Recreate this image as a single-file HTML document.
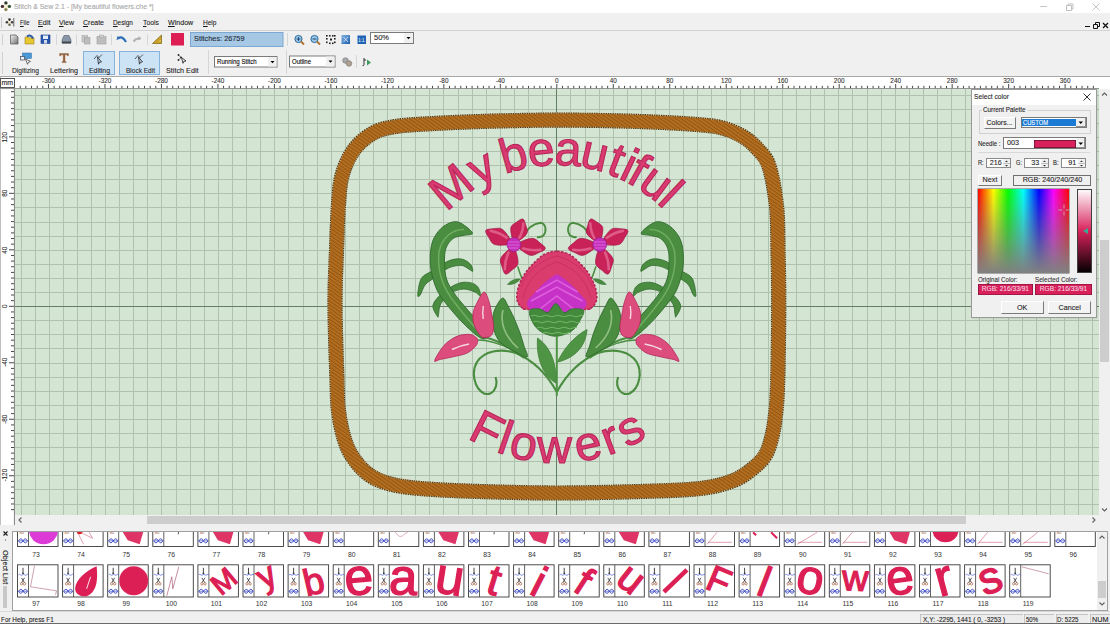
<!DOCTYPE html><html><head><meta charset="utf-8"><style>
html,body{margin:0;padding:0;width:1110px;height:624px;overflow:hidden;background:#f0f0f0}
body{position:relative;font-family:"Liberation Sans",sans-serif}
.r{position:absolute;display:block}
.t{position:absolute;white-space:nowrap;transform-origin:0 50%;font-family:"Liberation Sans",sans-serif;-webkit-text-stroke:0.1px currentColor}
u{text-decoration:underline;text-underline-offset:1px;text-decoration-thickness:0.6px}
</style></head><body>
<div class="r" style="left:0px;top:0px;width:1110px;height:13px;background:#ffffff"></div>
<svg class="r" style="left:0;top:0" width="14" height="13" viewBox="0 0 14 13">
<circle cx="5.9" cy="6.3" r="2.6" fill="#f4f0d8"/>
<circle cx="5.9" cy="2.9" r="1.7" fill="#2e3a2e"/><circle cx="9.4" cy="6.4" r="1.7" fill="#3a5a3a"/>
<circle cx="5.9" cy="9.6" r="1.7" fill="#8a8a5a"/><circle cx="2.4" cy="6.4" r="1.7" fill="#4a3030"/></svg>
<div class="t" style="left:13.50px;top:3.35px;font-size:7.4px;line-height:7.4px;color:#a6a6a6;font-weight:normal;transform:scaleX(0.9356);">Stitch &amp; Sew 2.1 - [My beautiful flowers.che *]</div>
<div class="r" style="left:1040px;top:6px;width:7px;height:1px;background:#c4c4c4"></div>
<svg class="r" style="left:1064px;top:2px" width="10" height="9"><path d="M2.5 3.5 h5 v5 h-5 z M4 3.5 v-1.5 h5 v5 h-1.5" fill="none" stroke="#c0c0c0" stroke-width="1"/></svg>
<svg class="r" style="left:1091px;top:2px" width="10" height="9"><path d="M1.5 1.5 L8.5 8.5 M8.5 1.5 L1.5 8.5" stroke="#c4c4c4" stroke-width="1"/></svg>
<div class="r" style="left:0px;top:13px;width:1110px;height:17px;background:#f0f0f0"></div>
<div class="r" style="left:0px;top:30px;width:1110px;height:1px;background:#d2d2d2"></div>
<div class="r" style="left:1px;top:17px;width:1px;height:11px;background:#c8c8d0"></div>
<svg class="r" style="left:5px;top:17px" width="11" height="11" viewBox="0 0 11 11">
<circle cx="4.5" cy="5.2" r="2" fill="#f4f0d8"/>
<circle cx="4.5" cy="2.6" r="1.3" fill="#333"/><circle cx="7.1" cy="5.2" r="1.3" fill="#444"/>
<circle cx="4.5" cy="7.8" r="1.3" fill="#6a6a50"/><circle cx="1.9" cy="5.2" r="1.3" fill="#3a3a3a"/>
<line x1="8.8" y1="1" x2="8.8" y2="9.5" stroke="#555" stroke-width="0.9"/></svg>
<div class="t" style="left:19.5px;top:18.55px;font-size:7.6px;line-height:7.6px;color:#1a1a1a;transform:scaleX(0.7764)"><u>F</u>ile</div>
<div class="t" style="left:37.8px;top:18.55px;font-size:7.6px;line-height:7.6px;color:#1a1a1a;transform:scaleX(0.9553)"><u>E</u>dit</div>
<div class="t" style="left:59px;top:18.55px;font-size:7.6px;line-height:7.6px;color:#1a1a1a;transform:scaleX(0.9190)"><u>V</u>iew</div>
<div class="t" style="left:83px;top:18.55px;font-size:7.6px;line-height:7.6px;color:#1a1a1a;transform:scaleX(0.9214)"><u>C</u>reate</div>
<div class="t" style="left:112.9px;top:18.55px;font-size:7.6px;line-height:7.6px;color:#1a1a1a;transform:scaleX(0.8419)"><u>D</u>esign</div>
<div class="t" style="left:142.7px;top:18.55px;font-size:7.6px;line-height:7.6px;color:#1a1a1a;transform:scaleX(0.8913)"><u>T</u>ools</div>
<div class="t" style="left:167.9px;top:18.55px;font-size:7.6px;line-height:7.6px;color:#1a1a1a;transform:scaleX(0.9330)"><u>W</u>indow</div>
<div class="t" style="left:202.5px;top:18.55px;font-size:7.6px;line-height:7.6px;color:#1a1a1a;transform:scaleX(0.8580)"><u>H</u>elp</div>
<div class="r" style="left:1085px;top:26px;width:5px;height:1px;background:#111"></div>
<svg class="r" style="left:1093px;top:22px" width="7" height="7"><path d="M0.5 2.5 h4 v4 h-4 z" fill="none" stroke="#111" stroke-width="1"/><path d="M2.5 2.5 v-2 h4 v4 h-2" fill="none" stroke="#111" stroke-width="1"/></svg>
<svg class="r" style="left:1102px;top:22px" width="7" height="7"><path d="M1 1 L6 6 M6 1 L1 6" stroke="#111" stroke-width="1.3"/></svg>
<div class="r" style="left:0px;top:31px;width:1110px;height:45px;background:#f0f0f0"></div>
<div class="r" style="left:2px;top:34px;width:1px;height:11px;background:#d0d0d0"></div>
<div class="r" style="left:2px;top:52px;width:1px;height:22px;background:#d0d0d0"></div>
<div class="r" style="left:56px;top:34px;width:1px;height:11px;background:#d6d6d6"></div>
<div class="r" style="left:76px;top:34px;width:1px;height:11px;background:#d6d6d6"></div>
<div class="r" style="left:111px;top:34px;width:1px;height:11px;background:#d6d6d6"></div>
<div class="r" style="left:147px;top:34px;width:1px;height:11px;background:#d6d6d6"></div>
<div class="r" style="left:287px;top:33px;width:1px;height:13px;background:#d6d6d6"></div>
<div class="r" style="left:208px;top:50px;width:1px;height:24px;background:#d6d6d6"></div>
<div class="r" style="left:286px;top:50px;width:1px;height:24px;background:#d6d6d6"></div>
<div class="r" style="left:356px;top:55px;width:1px;height:13px;background:#d6d6d6"></div>
<svg class="r" style="left:0;top:31px" width="420" height="17" viewBox="0 31 420 17">
<defs><linearGradient id="gdoc" x1="0" y1="0" x2="1" y2="1"><stop offset="0" stop-color="#f4f4f4"/><stop offset="1" stop-color="#707070"/></linearGradient>
<linearGradient id="gblue" x1="0" y1="0" x2="1" y2="1"><stop offset="0" stop-color="#7fb0e0"/><stop offset="1" stop-color="#1f5fae"/></linearGradient></defs>
<path d="M10.5 35 h5.5 l2 2 v7 h-7.5 z" fill="url(#gdoc)" stroke="#555" stroke-width="0.7"/>
<path d="M25 37 h3 l1 1 h5 v6 h-9 z" fill="#e8c830" stroke="#a08020" stroke-width="0.6"/>
<path d="M27 36.5 q4 -2.5 6 2" fill="none" stroke="#2d5aa0" stroke-width="2"/>
<rect x="41" y="35" width="9" height="8.5" fill="#2a58b0" stroke="#1a3a80" stroke-width="0.6"/>
<rect x="43" y="35.5" width="5" height="3.5" fill="#e8eef8"/><rect x="44" y="40" width="3" height="3.5" fill="#d0d8e8"/>
<path d="M62 40 l2 -4.5 h5 l2 4.5 v3 h-9 z" fill="#8a96a8" stroke="#505a6a" stroke-width="0.6"/>
<rect x="62" y="41.5" width="9" height="2" fill="#404850"/>
<rect x="82" y="35.5" width="5.5" height="6.5" fill="#c8c8c8" stroke="#a8a8a8" stroke-width="0.6"/>
<rect x="84.5" y="37.5" width="5.5" height="6.5" fill="#bcbcbc" stroke="#a0a0a0" stroke-width="0.6"/>
<rect x="97" y="36.5" width="9" height="7.5" fill="#bdbdbd" stroke="#a0a0a0" stroke-width="0.6"/>
<rect x="99.5" y="35" width="4" height="2.5" fill="#cfcfcf" stroke="#a0a0a0" stroke-width="0.5"/>
<path d="M118 38.5 q4 -3.5 8 3.5" fill="none" stroke="#2f6fb8" stroke-width="2.2"/><path d="M116.5 40 l1 -4 l3 2.5 z" fill="#2f6fb8"/>
<path d="M133.5 41.5 q3 -4 7 -2.5" fill="none" stroke="#b4b4b4" stroke-width="2.2"/><path d="M141.5 38.5 l-3 -2.5 l-0.2 4 z" fill="#b4b4b4"/>
<path d="M152.5 43.5 l9 -8.5 v8.5 z" fill="#c9a227" stroke="#7a6010" stroke-width="0.7"/><path d="M159 41.5 l1.5 -1.5 v1.5z" fill="#fff6b0"/>
<rect x="171" y="33" width="13" height="12.5" fill="#dd1e55"/>
<rect x="190.5" y="32.5" width="92.5" height="14" fill="#a6c8e4" stroke="#7aa8d2" stroke-width="1"/>
<circle cx="298.5" cy="39" r="3.6" fill="#9cc8e8" stroke="#2f6a9a" stroke-width="1"/><path d="M301 41.5 l3 3" stroke="#b07030" stroke-width="1.8"/><path d="M296.6 39 h3.8 M298.5 37.1 v3.8" stroke="#0d3d6a" stroke-width="0.9"/>
<circle cx="314.5" cy="39" r="3.6" fill="#9cc8e8" stroke="#2f6a9a" stroke-width="1"/><path d="M317 41.5 l3 3" stroke="#b07030" stroke-width="1.8"/><path d="M312.6 39 h3.8" stroke="#0d3d6a" stroke-width="0.9"/>
<g fill="#222"><rect x="326" y="35" width="1.6" height="1.6"/><rect x="329" y="35" width="1.6" height="1.6"/><rect x="332" y="35" width="1.6" height="1.6"/><rect x="334" y="35" width="1.6" height="1.6"/>
<rect x="326" y="38" width="1.6" height="1.6"/><rect x="330" y="38.5" width="2" height="2"/><rect x="334" y="38" width="1.6" height="1.6"/>
<rect x="326" y="41.5" width="1.6" height="1.6"/><rect x="329" y="42.5" width="1.6" height="1.6"/><rect x="332" y="42.5" width="1.6" height="1.6"/><rect x="334" y="41.5" width="1.6" height="1.6"/></g>
<rect x="341.5" y="35" width="8.5" height="9" fill="url(#gblue)"/><path d="M343.5 37 l4.5 5 M348 37 l-4.5 5" stroke="#e0f0ff" stroke-width="0.8"/>
<rect x="357.5" y="35.5" width="8.5" height="8.5" fill="#1e63b4"/><text x="358.3" y="42" font-size="4.5" fill="#fff" font-family="Liberation Sans">1:1</text>
<rect x="370.5" y="32.5" width="43" height="11" fill="#fff" stroke="#7a7a7a" stroke-width="1"/>
<rect x="404" y="33" width="9" height="10" fill="#f0f0f0"/><path d="M406.5 37 h4 l-2 2.2 z" fill="#000"/>
</svg>
<div class="t" style="left:194.00px;top:35.35px;font-size:7.6px;line-height:7.6px;color:#1c2a36;font-weight:normal;transform:scaleX(0.9647);">Stitches: 26759</div>
<div class="t" style="left:373.50px;top:34.05px;font-size:7.6px;line-height:7.6px;color:#222;font-weight:normal;transform:scaleX(0.9869);">50%</div>
<div class="r" style="left:83px;top:51px;width:32px;height:24px;background:#cce3f6;box-shadow:inset 0 0 0 1px #86b3dc"></div>
<div class="r" style="left:119px;top:51px;width:41px;height:24px;background:#cce3f6;box-shadow:inset 0 0 0 1px #86b3dc"></div>
<svg class="r" style="left:0;top:48px" width="380" height="28" viewBox="0 48 380 28">
<rect x="22.5" y="53" width="9" height="5.5" fill="#4a9ad8" stroke="#2a6aa8" stroke-width="0.5"/>
<rect x="20.5" y="56.5" width="4" height="3.5" fill="#e8f0f8" stroke="#445" stroke-width="0.7"/>
<path d="M25.5 59 l5 2.5 l-2 0.6 l-1 2.2 z" fill="#fff" stroke="#333" stroke-width="0.7"/>
<path d="M59.5 53.5 h9 v2.3 h-1 l-0.8 -1 h-1.7 v6.4 l1.2 0.6 v0.8 h-4.2 v-0.8 l1.2 -0.6 v-6.4 h-1.7 l-0.8 1 h-1 z" fill="#a0643a" stroke="#6a3a1a" stroke-width="0.3"/>
<path d="M94 59 l3 -3.5 l2 2 l3 -3" fill="none" stroke="#333" stroke-width="0.8"/><path d="M97.5 57 l4 5 l-2.2 0.2 l-0.8 2 z" fill="#c4dcf0" stroke="#222" stroke-width="0.8"/>
<path d="M135 59 l3 -3.5 l2 2 l3 -3" fill="none" stroke="#333" stroke-width="0.8"/><path d="M138.5 57 l4 5 l-2.2 0.2 l-0.8 2 z" fill="#c4dcf0" stroke="#222" stroke-width="0.8"/>
<circle cx="178.5" cy="55" r="0.9" fill="#222"/><circle cx="181" cy="57.5" r="0.9" fill="#222"/><circle cx="178.5" cy="60" r="0.9" fill="#222"/>
<path d="M178.5 55 l2.5 2.5 l-2.5 2.5" fill="none" stroke="#333" stroke-width="0.6"/>
<path d="M181.5 57.5 l4.5 3.5 l-2.2 0.3 l-0.8 2 z" fill="#f0f0f0" stroke="#222" stroke-width="0.8"/>
<rect x="214.5" y="56.5" width="62.5" height="10.5" fill="#fff" stroke="#7a7a7a" stroke-width="1"/>
<rect x="268" y="57" width="8.5" height="9.5" fill="#f0f0f0"/><path d="M270.5 61 h4 l-2 2.2 z" fill="#000"/>
<rect x="289.5" y="56" width="45.5" height="11" fill="#fff" stroke="#7a7a7a" stroke-width="1"/>
<rect x="326" y="56.5" width="8.5" height="10" fill="#f0f0f0"/><path d="M328.5 60.5 h4 l-2 2.2 z" fill="#000"/>
<circle cx="345.5" cy="60.5" r="2.8" fill="#a8a8a8" stroke="#777" stroke-width="0.6"/><circle cx="349" cy="63.5" r="2.8" fill="#b0a090" stroke="#777" stroke-width="0.6"/>
<path d="M364 58 v6.5 q0 1.5 -1.5 1.2 M364 60 h2" fill="none" stroke="#333" stroke-width="1"/><path d="M367 59.5 l4 3 l-4 3 z" fill="#3a9a5a"/>
</svg>
<div class="t" style="left:12.00px;top:66.65px;font-size:7.6px;line-height:7.6px;color:#222;font-weight:normal;transform:scaleX(0.8764);">Digitizing</div>
<div class="t" style="left:50.00px;top:66.65px;font-size:7.6px;line-height:7.6px;color:#222;font-weight:normal;transform:scaleX(0.9475);">Lettering</div>
<div class="t" style="left:89.00px;top:66.65px;font-size:7.6px;line-height:7.6px;color:#222;font-weight:normal;transform:scaleX(0.9044);">Editing</div>
<div class="t" style="left:126.00px;top:66.65px;font-size:7.6px;line-height:7.6px;color:#222;font-weight:normal;transform:scaleX(0.8589);">Block Edit</div>
<div class="t" style="left:166.40px;top:66.65px;font-size:7.6px;line-height:7.6px;color:#222;font-weight:normal;transform:scaleX(0.9536);">Stitch Edit</div>
<div class="t" style="left:216.50px;top:58.16px;font-size:7.0px;line-height:7.0px;color:#000;font-weight:normal;transform:scaleX(0.8720);">Running Stitch</div>
<div class="t" style="left:292.00px;top:57.86px;font-size:7.0px;line-height:7.0px;color:#000;font-weight:normal;transform:scaleX(0.8567);">Outline</div>
<div class="r" style="left:0px;top:76px;width:1110px;height:1px;background:#a8a8a8"></div>
<div class="r" style="left:0px;top:77px;width:1110px;height:12px;background:#ffffff"></div>
<div class="r" style="left:0px;top:89px;width:15px;height:436px;background:#ffffff"></div>
<div class="r" style="left:0px;top:77px;width:1px;height:448px;background:#c0c0c0"></div>
<svg class="r" style="left:0;top:76px" width="1110" height="450" viewBox="0 76 1110 450"><line x1="20.24" y1="85.8" x2="20.24" y2="89" stroke="#333" stroke-width="0.9"/><line x1="25.89" y1="85.8" x2="25.89" y2="89" stroke="#333" stroke-width="0.9"/><line x1="31.54" y1="85.8" x2="31.54" y2="89" stroke="#333" stroke-width="0.9"/><line x1="37.18" y1="85.8" x2="37.18" y2="89" stroke="#333" stroke-width="0.9"/><line x1="42.83" y1="85.8" x2="42.83" y2="89" stroke="#333" stroke-width="0.9"/><line x1="48.48" y1="84" x2="48.48" y2="89" stroke="#333" stroke-width="0.9"/><line x1="54.13" y1="85.8" x2="54.13" y2="89" stroke="#333" stroke-width="0.9"/><line x1="59.78" y1="85.8" x2="59.78" y2="89" stroke="#333" stroke-width="0.9"/><line x1="65.42" y1="85.8" x2="65.42" y2="89" stroke="#333" stroke-width="0.9"/><line x1="71.07" y1="85.8" x2="71.07" y2="89" stroke="#333" stroke-width="0.9"/><line x1="76.72" y1="85.8" x2="76.72" y2="89" stroke="#333" stroke-width="0.9"/><line x1="82.37" y1="85.8" x2="82.37" y2="89" stroke="#333" stroke-width="0.9"/><line x1="88.02" y1="85.8" x2="88.02" y2="89" stroke="#333" stroke-width="0.9"/><line x1="93.66" y1="85.8" x2="93.66" y2="89" stroke="#333" stroke-width="0.9"/><line x1="99.31" y1="85.8" x2="99.31" y2="89" stroke="#333" stroke-width="0.9"/><line x1="104.96" y1="84" x2="104.96" y2="89" stroke="#333" stroke-width="0.9"/><line x1="110.61" y1="85.8" x2="110.61" y2="89" stroke="#333" stroke-width="0.9"/><line x1="116.26" y1="85.8" x2="116.26" y2="89" stroke="#333" stroke-width="0.9"/><line x1="121.90" y1="85.8" x2="121.90" y2="89" stroke="#333" stroke-width="0.9"/><line x1="127.55" y1="85.8" x2="127.55" y2="89" stroke="#333" stroke-width="0.9"/><line x1="133.20" y1="85.8" x2="133.20" y2="89" stroke="#333" stroke-width="0.9"/><line x1="138.85" y1="85.8" x2="138.85" y2="89" stroke="#333" stroke-width="0.9"/><line x1="144.50" y1="85.8" x2="144.50" y2="89" stroke="#333" stroke-width="0.9"/><line x1="150.14" y1="85.8" x2="150.14" y2="89" stroke="#333" stroke-width="0.9"/><line x1="155.79" y1="85.8" x2="155.79" y2="89" stroke="#333" stroke-width="0.9"/><line x1="161.44" y1="84" x2="161.44" y2="89" stroke="#333" stroke-width="0.9"/><line x1="167.09" y1="85.8" x2="167.09" y2="89" stroke="#333" stroke-width="0.9"/><line x1="172.74" y1="85.8" x2="172.74" y2="89" stroke="#333" stroke-width="0.9"/><line x1="178.38" y1="85.8" x2="178.38" y2="89" stroke="#333" stroke-width="0.9"/><line x1="184.03" y1="85.8" x2="184.03" y2="89" stroke="#333" stroke-width="0.9"/><line x1="189.68" y1="85.8" x2="189.68" y2="89" stroke="#333" stroke-width="0.9"/><line x1="195.33" y1="85.8" x2="195.33" y2="89" stroke="#333" stroke-width="0.9"/><line x1="200.98" y1="85.8" x2="200.98" y2="89" stroke="#333" stroke-width="0.9"/><line x1="206.62" y1="85.8" x2="206.62" y2="89" stroke="#333" stroke-width="0.9"/><line x1="212.27" y1="85.8" x2="212.27" y2="89" stroke="#333" stroke-width="0.9"/><line x1="217.92" y1="84" x2="217.92" y2="89" stroke="#333" stroke-width="0.9"/><line x1="223.57" y1="85.8" x2="223.57" y2="89" stroke="#333" stroke-width="0.9"/><line x1="229.22" y1="85.8" x2="229.22" y2="89" stroke="#333" stroke-width="0.9"/><line x1="234.86" y1="85.8" x2="234.86" y2="89" stroke="#333" stroke-width="0.9"/><line x1="240.51" y1="85.8" x2="240.51" y2="89" stroke="#333" stroke-width="0.9"/><line x1="246.16" y1="85.8" x2="246.16" y2="89" stroke="#333" stroke-width="0.9"/><line x1="251.81" y1="85.8" x2="251.81" y2="89" stroke="#333" stroke-width="0.9"/><line x1="257.46" y1="85.8" x2="257.46" y2="89" stroke="#333" stroke-width="0.9"/><line x1="263.10" y1="85.8" x2="263.10" y2="89" stroke="#333" stroke-width="0.9"/><line x1="268.75" y1="85.8" x2="268.75" y2="89" stroke="#333" stroke-width="0.9"/><line x1="274.40" y1="84" x2="274.40" y2="89" stroke="#333" stroke-width="0.9"/><line x1="280.05" y1="85.8" x2="280.05" y2="89" stroke="#333" stroke-width="0.9"/><line x1="285.70" y1="85.8" x2="285.70" y2="89" stroke="#333" stroke-width="0.9"/><line x1="291.34" y1="85.8" x2="291.34" y2="89" stroke="#333" stroke-width="0.9"/><line x1="296.99" y1="85.8" x2="296.99" y2="89" stroke="#333" stroke-width="0.9"/><line x1="302.64" y1="85.8" x2="302.64" y2="89" stroke="#333" stroke-width="0.9"/><line x1="308.29" y1="85.8" x2="308.29" y2="89" stroke="#333" stroke-width="0.9"/><line x1="313.94" y1="85.8" x2="313.94" y2="89" stroke="#333" stroke-width="0.9"/><line x1="319.58" y1="85.8" x2="319.58" y2="89" stroke="#333" stroke-width="0.9"/><line x1="325.23" y1="85.8" x2="325.23" y2="89" stroke="#333" stroke-width="0.9"/><line x1="330.88" y1="84" x2="330.88" y2="89" stroke="#333" stroke-width="0.9"/><line x1="336.53" y1="85.8" x2="336.53" y2="89" stroke="#333" stroke-width="0.9"/><line x1="342.18" y1="85.8" x2="342.18" y2="89" stroke="#333" stroke-width="0.9"/><line x1="347.82" y1="85.8" x2="347.82" y2="89" stroke="#333" stroke-width="0.9"/><line x1="353.47" y1="85.8" x2="353.47" y2="89" stroke="#333" stroke-width="0.9"/><line x1="359.12" y1="85.8" x2="359.12" y2="89" stroke="#333" stroke-width="0.9"/><line x1="364.77" y1="85.8" x2="364.77" y2="89" stroke="#333" stroke-width="0.9"/><line x1="370.42" y1="85.8" x2="370.42" y2="89" stroke="#333" stroke-width="0.9"/><line x1="376.06" y1="85.8" x2="376.06" y2="89" stroke="#333" stroke-width="0.9"/><line x1="381.71" y1="85.8" x2="381.71" y2="89" stroke="#333" stroke-width="0.9"/><line x1="387.36" y1="84" x2="387.36" y2="89" stroke="#333" stroke-width="0.9"/><line x1="393.01" y1="85.8" x2="393.01" y2="89" stroke="#333" stroke-width="0.9"/><line x1="398.66" y1="85.8" x2="398.66" y2="89" stroke="#333" stroke-width="0.9"/><line x1="404.30" y1="85.8" x2="404.30" y2="89" stroke="#333" stroke-width="0.9"/><line x1="409.95" y1="85.8" x2="409.95" y2="89" stroke="#333" stroke-width="0.9"/><line x1="415.60" y1="85.8" x2="415.60" y2="89" stroke="#333" stroke-width="0.9"/><line x1="421.25" y1="85.8" x2="421.25" y2="89" stroke="#333" stroke-width="0.9"/><line x1="426.90" y1="85.8" x2="426.90" y2="89" stroke="#333" stroke-width="0.9"/><line x1="432.54" y1="85.8" x2="432.54" y2="89" stroke="#333" stroke-width="0.9"/><line x1="438.19" y1="85.8" x2="438.19" y2="89" stroke="#333" stroke-width="0.9"/><line x1="443.84" y1="84" x2="443.84" y2="89" stroke="#333" stroke-width="0.9"/><line x1="449.49" y1="85.8" x2="449.49" y2="89" stroke="#333" stroke-width="0.9"/><line x1="455.14" y1="85.8" x2="455.14" y2="89" stroke="#333" stroke-width="0.9"/><line x1="460.78" y1="85.8" x2="460.78" y2="89" stroke="#333" stroke-width="0.9"/><line x1="466.43" y1="85.8" x2="466.43" y2="89" stroke="#333" stroke-width="0.9"/><line x1="472.08" y1="85.8" x2="472.08" y2="89" stroke="#333" stroke-width="0.9"/><line x1="477.73" y1="85.8" x2="477.73" y2="89" stroke="#333" stroke-width="0.9"/><line x1="483.38" y1="85.8" x2="483.38" y2="89" stroke="#333" stroke-width="0.9"/><line x1="489.02" y1="85.8" x2="489.02" y2="89" stroke="#333" stroke-width="0.9"/><line x1="494.67" y1="85.8" x2="494.67" y2="89" stroke="#333" stroke-width="0.9"/><line x1="500.32" y1="84" x2="500.32" y2="89" stroke="#333" stroke-width="0.9"/><line x1="505.97" y1="85.8" x2="505.97" y2="89" stroke="#333" stroke-width="0.9"/><line x1="511.62" y1="85.8" x2="511.62" y2="89" stroke="#333" stroke-width="0.9"/><line x1="517.26" y1="85.8" x2="517.26" y2="89" stroke="#333" stroke-width="0.9"/><line x1="522.91" y1="85.8" x2="522.91" y2="89" stroke="#333" stroke-width="0.9"/><line x1="528.56" y1="85.8" x2="528.56" y2="89" stroke="#333" stroke-width="0.9"/><line x1="534.21" y1="85.8" x2="534.21" y2="89" stroke="#333" stroke-width="0.9"/><line x1="539.86" y1="85.8" x2="539.86" y2="89" stroke="#333" stroke-width="0.9"/><line x1="545.50" y1="85.8" x2="545.50" y2="89" stroke="#333" stroke-width="0.9"/><line x1="551.15" y1="85.8" x2="551.15" y2="89" stroke="#333" stroke-width="0.9"/><line x1="556.80" y1="84" x2="556.80" y2="89" stroke="#333" stroke-width="0.9"/><line x1="562.45" y1="85.8" x2="562.45" y2="89" stroke="#333" stroke-width="0.9"/><line x1="568.10" y1="85.8" x2="568.10" y2="89" stroke="#333" stroke-width="0.9"/><line x1="573.74" y1="85.8" x2="573.74" y2="89" stroke="#333" stroke-width="0.9"/><line x1="579.39" y1="85.8" x2="579.39" y2="89" stroke="#333" stroke-width="0.9"/><line x1="585.04" y1="85.8" x2="585.04" y2="89" stroke="#333" stroke-width="0.9"/><line x1="590.69" y1="85.8" x2="590.69" y2="89" stroke="#333" stroke-width="0.9"/><line x1="596.34" y1="85.8" x2="596.34" y2="89" stroke="#333" stroke-width="0.9"/><line x1="601.98" y1="85.8" x2="601.98" y2="89" stroke="#333" stroke-width="0.9"/><line x1="607.63" y1="85.8" x2="607.63" y2="89" stroke="#333" stroke-width="0.9"/><line x1="613.28" y1="84" x2="613.28" y2="89" stroke="#333" stroke-width="0.9"/><line x1="618.93" y1="85.8" x2="618.93" y2="89" stroke="#333" stroke-width="0.9"/><line x1="624.58" y1="85.8" x2="624.58" y2="89" stroke="#333" stroke-width="0.9"/><line x1="630.22" y1="85.8" x2="630.22" y2="89" stroke="#333" stroke-width="0.9"/><line x1="635.87" y1="85.8" x2="635.87" y2="89" stroke="#333" stroke-width="0.9"/><line x1="641.52" y1="85.8" x2="641.52" y2="89" stroke="#333" stroke-width="0.9"/><line x1="647.17" y1="85.8" x2="647.17" y2="89" stroke="#333" stroke-width="0.9"/><line x1="652.82" y1="85.8" x2="652.82" y2="89" stroke="#333" stroke-width="0.9"/><line x1="658.46" y1="85.8" x2="658.46" y2="89" stroke="#333" stroke-width="0.9"/><line x1="664.11" y1="85.8" x2="664.11" y2="89" stroke="#333" stroke-width="0.9"/><line x1="669.76" y1="84" x2="669.76" y2="89" stroke="#333" stroke-width="0.9"/><line x1="675.41" y1="85.8" x2="675.41" y2="89" stroke="#333" stroke-width="0.9"/><line x1="681.06" y1="85.8" x2="681.06" y2="89" stroke="#333" stroke-width="0.9"/><line x1="686.70" y1="85.8" x2="686.70" y2="89" stroke="#333" stroke-width="0.9"/><line x1="692.35" y1="85.8" x2="692.35" y2="89" stroke="#333" stroke-width="0.9"/><line x1="698.00" y1="85.8" x2="698.00" y2="89" stroke="#333" stroke-width="0.9"/><line x1="703.65" y1="85.8" x2="703.65" y2="89" stroke="#333" stroke-width="0.9"/><line x1="709.30" y1="85.8" x2="709.30" y2="89" stroke="#333" stroke-width="0.9"/><line x1="714.94" y1="85.8" x2="714.94" y2="89" stroke="#333" stroke-width="0.9"/><line x1="720.59" y1="85.8" x2="720.59" y2="89" stroke="#333" stroke-width="0.9"/><line x1="726.24" y1="84" x2="726.24" y2="89" stroke="#333" stroke-width="0.9"/><line x1="731.89" y1="85.8" x2="731.89" y2="89" stroke="#333" stroke-width="0.9"/><line x1="737.54" y1="85.8" x2="737.54" y2="89" stroke="#333" stroke-width="0.9"/><line x1="743.18" y1="85.8" x2="743.18" y2="89" stroke="#333" stroke-width="0.9"/><line x1="748.83" y1="85.8" x2="748.83" y2="89" stroke="#333" stroke-width="0.9"/><line x1="754.48" y1="85.8" x2="754.48" y2="89" stroke="#333" stroke-width="0.9"/><line x1="760.13" y1="85.8" x2="760.13" y2="89" stroke="#333" stroke-width="0.9"/><line x1="765.78" y1="85.8" x2="765.78" y2="89" stroke="#333" stroke-width="0.9"/><line x1="771.42" y1="85.8" x2="771.42" y2="89" stroke="#333" stroke-width="0.9"/><line x1="777.07" y1="85.8" x2="777.07" y2="89" stroke="#333" stroke-width="0.9"/><line x1="782.72" y1="84" x2="782.72" y2="89" stroke="#333" stroke-width="0.9"/><line x1="788.37" y1="85.8" x2="788.37" y2="89" stroke="#333" stroke-width="0.9"/><line x1="794.02" y1="85.8" x2="794.02" y2="89" stroke="#333" stroke-width="0.9"/><line x1="799.66" y1="85.8" x2="799.66" y2="89" stroke="#333" stroke-width="0.9"/><line x1="805.31" y1="85.8" x2="805.31" y2="89" stroke="#333" stroke-width="0.9"/><line x1="810.96" y1="85.8" x2="810.96" y2="89" stroke="#333" stroke-width="0.9"/><line x1="816.61" y1="85.8" x2="816.61" y2="89" stroke="#333" stroke-width="0.9"/><line x1="822.26" y1="85.8" x2="822.26" y2="89" stroke="#333" stroke-width="0.9"/><line x1="827.90" y1="85.8" x2="827.90" y2="89" stroke="#333" stroke-width="0.9"/><line x1="833.55" y1="85.8" x2="833.55" y2="89" stroke="#333" stroke-width="0.9"/><line x1="839.20" y1="84" x2="839.20" y2="89" stroke="#333" stroke-width="0.9"/><line x1="844.85" y1="85.8" x2="844.85" y2="89" stroke="#333" stroke-width="0.9"/><line x1="850.50" y1="85.8" x2="850.50" y2="89" stroke="#333" stroke-width="0.9"/><line x1="856.14" y1="85.8" x2="856.14" y2="89" stroke="#333" stroke-width="0.9"/><line x1="861.79" y1="85.8" x2="861.79" y2="89" stroke="#333" stroke-width="0.9"/><line x1="867.44" y1="85.8" x2="867.44" y2="89" stroke="#333" stroke-width="0.9"/><line x1="873.09" y1="85.8" x2="873.09" y2="89" stroke="#333" stroke-width="0.9"/><line x1="878.74" y1="85.8" x2="878.74" y2="89" stroke="#333" stroke-width="0.9"/><line x1="884.38" y1="85.8" x2="884.38" y2="89" stroke="#333" stroke-width="0.9"/><line x1="890.03" y1="85.8" x2="890.03" y2="89" stroke="#333" stroke-width="0.9"/><line x1="895.68" y1="84" x2="895.68" y2="89" stroke="#333" stroke-width="0.9"/><line x1="901.33" y1="85.8" x2="901.33" y2="89" stroke="#333" stroke-width="0.9"/><line x1="906.98" y1="85.8" x2="906.98" y2="89" stroke="#333" stroke-width="0.9"/><line x1="912.62" y1="85.8" x2="912.62" y2="89" stroke="#333" stroke-width="0.9"/><line x1="918.27" y1="85.8" x2="918.27" y2="89" stroke="#333" stroke-width="0.9"/><line x1="923.92" y1="85.8" x2="923.92" y2="89" stroke="#333" stroke-width="0.9"/><line x1="929.57" y1="85.8" x2="929.57" y2="89" stroke="#333" stroke-width="0.9"/><line x1="935.22" y1="85.8" x2="935.22" y2="89" stroke="#333" stroke-width="0.9"/><line x1="940.86" y1="85.8" x2="940.86" y2="89" stroke="#333" stroke-width="0.9"/><line x1="946.51" y1="85.8" x2="946.51" y2="89" stroke="#333" stroke-width="0.9"/><line x1="952.16" y1="84" x2="952.16" y2="89" stroke="#333" stroke-width="0.9"/><line x1="957.81" y1="85.8" x2="957.81" y2="89" stroke="#333" stroke-width="0.9"/><line x1="963.46" y1="85.8" x2="963.46" y2="89" stroke="#333" stroke-width="0.9"/><line x1="969.10" y1="85.8" x2="969.10" y2="89" stroke="#333" stroke-width="0.9"/><line x1="974.75" y1="85.8" x2="974.75" y2="89" stroke="#333" stroke-width="0.9"/><line x1="980.40" y1="85.8" x2="980.40" y2="89" stroke="#333" stroke-width="0.9"/><line x1="986.05" y1="85.8" x2="986.05" y2="89" stroke="#333" stroke-width="0.9"/><line x1="991.70" y1="85.8" x2="991.70" y2="89" stroke="#333" stroke-width="0.9"/><line x1="997.34" y1="85.8" x2="997.34" y2="89" stroke="#333" stroke-width="0.9"/><line x1="1002.99" y1="85.8" x2="1002.99" y2="89" stroke="#333" stroke-width="0.9"/><line x1="1008.64" y1="84" x2="1008.64" y2="89" stroke="#333" stroke-width="0.9"/><line x1="1014.29" y1="85.8" x2="1014.29" y2="89" stroke="#333" stroke-width="0.9"/><line x1="1019.94" y1="85.8" x2="1019.94" y2="89" stroke="#333" stroke-width="0.9"/><line x1="1025.58" y1="85.8" x2="1025.58" y2="89" stroke="#333" stroke-width="0.9"/><line x1="1031.23" y1="85.8" x2="1031.23" y2="89" stroke="#333" stroke-width="0.9"/><line x1="1036.88" y1="85.8" x2="1036.88" y2="89" stroke="#333" stroke-width="0.9"/><line x1="1042.53" y1="85.8" x2="1042.53" y2="89" stroke="#333" stroke-width="0.9"/><line x1="1048.18" y1="85.8" x2="1048.18" y2="89" stroke="#333" stroke-width="0.9"/><line x1="1053.82" y1="85.8" x2="1053.82" y2="89" stroke="#333" stroke-width="0.9"/><line x1="1059.47" y1="85.8" x2="1059.47" y2="89" stroke="#333" stroke-width="0.9"/><line x1="1065.12" y1="84" x2="1065.12" y2="89" stroke="#333" stroke-width="0.9"/><line x1="1070.77" y1="85.8" x2="1070.77" y2="89" stroke="#333" stroke-width="0.9"/><line x1="1076.42" y1="85.8" x2="1076.42" y2="89" stroke="#333" stroke-width="0.9"/><line x1="1082.06" y1="85.8" x2="1082.06" y2="89" stroke="#333" stroke-width="0.9"/><line x1="1087.71" y1="85.8" x2="1087.71" y2="89" stroke="#333" stroke-width="0.9"/><line x1="1093.36" y1="85.8" x2="1093.36" y2="89" stroke="#333" stroke-width="0.9"/><line x1="11" y1="509.63" x2="14.5" y2="509.63" stroke="#333" stroke-width="0.9"/><line x1="11" y1="503.98" x2="14.5" y2="503.98" stroke="#333" stroke-width="0.9"/><line x1="11" y1="498.33" x2="14.5" y2="498.33" stroke="#333" stroke-width="0.9"/><line x1="11" y1="492.68" x2="14.5" y2="492.68" stroke="#333" stroke-width="0.9"/><line x1="11" y1="487.04" x2="14.5" y2="487.04" stroke="#333" stroke-width="0.9"/><line x1="11" y1="481.39" x2="14.5" y2="481.39" stroke="#333" stroke-width="0.9"/><line x1="9" y1="475.74" x2="14.5" y2="475.74" stroke="#333" stroke-width="0.9"/><line x1="11" y1="470.09" x2="14.5" y2="470.09" stroke="#333" stroke-width="0.9"/><line x1="11" y1="464.44" x2="14.5" y2="464.44" stroke="#333" stroke-width="0.9"/><line x1="11" y1="458.80" x2="14.5" y2="458.80" stroke="#333" stroke-width="0.9"/><line x1="11" y1="453.15" x2="14.5" y2="453.15" stroke="#333" stroke-width="0.9"/><line x1="11" y1="447.50" x2="14.5" y2="447.50" stroke="#333" stroke-width="0.9"/><line x1="11" y1="441.85" x2="14.5" y2="441.85" stroke="#333" stroke-width="0.9"/><line x1="11" y1="436.20" x2="14.5" y2="436.20" stroke="#333" stroke-width="0.9"/><line x1="11" y1="430.56" x2="14.5" y2="430.56" stroke="#333" stroke-width="0.9"/><line x1="11" y1="424.91" x2="14.5" y2="424.91" stroke="#333" stroke-width="0.9"/><line x1="9" y1="419.26" x2="14.5" y2="419.26" stroke="#333" stroke-width="0.9"/><line x1="11" y1="413.61" x2="14.5" y2="413.61" stroke="#333" stroke-width="0.9"/><line x1="11" y1="407.96" x2="14.5" y2="407.96" stroke="#333" stroke-width="0.9"/><line x1="11" y1="402.32" x2="14.5" y2="402.32" stroke="#333" stroke-width="0.9"/><line x1="11" y1="396.67" x2="14.5" y2="396.67" stroke="#333" stroke-width="0.9"/><line x1="11" y1="391.02" x2="14.5" y2="391.02" stroke="#333" stroke-width="0.9"/><line x1="11" y1="385.37" x2="14.5" y2="385.37" stroke="#333" stroke-width="0.9"/><line x1="11" y1="379.72" x2="14.5" y2="379.72" stroke="#333" stroke-width="0.9"/><line x1="11" y1="374.08" x2="14.5" y2="374.08" stroke="#333" stroke-width="0.9"/><line x1="11" y1="368.43" x2="14.5" y2="368.43" stroke="#333" stroke-width="0.9"/><line x1="9" y1="362.78" x2="14.5" y2="362.78" stroke="#333" stroke-width="0.9"/><line x1="11" y1="357.13" x2="14.5" y2="357.13" stroke="#333" stroke-width="0.9"/><line x1="11" y1="351.48" x2="14.5" y2="351.48" stroke="#333" stroke-width="0.9"/><line x1="11" y1="345.84" x2="14.5" y2="345.84" stroke="#333" stroke-width="0.9"/><line x1="11" y1="340.19" x2="14.5" y2="340.19" stroke="#333" stroke-width="0.9"/><line x1="11" y1="334.54" x2="14.5" y2="334.54" stroke="#333" stroke-width="0.9"/><line x1="11" y1="328.89" x2="14.5" y2="328.89" stroke="#333" stroke-width="0.9"/><line x1="11" y1="323.24" x2="14.5" y2="323.24" stroke="#333" stroke-width="0.9"/><line x1="11" y1="317.60" x2="14.5" y2="317.60" stroke="#333" stroke-width="0.9"/><line x1="11" y1="311.95" x2="14.5" y2="311.95" stroke="#333" stroke-width="0.9"/><line x1="9" y1="306.30" x2="14.5" y2="306.30" stroke="#333" stroke-width="0.9"/><line x1="11" y1="300.65" x2="14.5" y2="300.65" stroke="#333" stroke-width="0.9"/><line x1="11" y1="295.00" x2="14.5" y2="295.00" stroke="#333" stroke-width="0.9"/><line x1="11" y1="289.36" x2="14.5" y2="289.36" stroke="#333" stroke-width="0.9"/><line x1="11" y1="283.71" x2="14.5" y2="283.71" stroke="#333" stroke-width="0.9"/><line x1="11" y1="278.06" x2="14.5" y2="278.06" stroke="#333" stroke-width="0.9"/><line x1="11" y1="272.41" x2="14.5" y2="272.41" stroke="#333" stroke-width="0.9"/><line x1="11" y1="266.76" x2="14.5" y2="266.76" stroke="#333" stroke-width="0.9"/><line x1="11" y1="261.12" x2="14.5" y2="261.12" stroke="#333" stroke-width="0.9"/><line x1="11" y1="255.47" x2="14.5" y2="255.47" stroke="#333" stroke-width="0.9"/><line x1="9" y1="249.82" x2="14.5" y2="249.82" stroke="#333" stroke-width="0.9"/><line x1="11" y1="244.17" x2="14.5" y2="244.17" stroke="#333" stroke-width="0.9"/><line x1="11" y1="238.52" x2="14.5" y2="238.52" stroke="#333" stroke-width="0.9"/><line x1="11" y1="232.88" x2="14.5" y2="232.88" stroke="#333" stroke-width="0.9"/><line x1="11" y1="227.23" x2="14.5" y2="227.23" stroke="#333" stroke-width="0.9"/><line x1="11" y1="221.58" x2="14.5" y2="221.58" stroke="#333" stroke-width="0.9"/><line x1="11" y1="215.93" x2="14.5" y2="215.93" stroke="#333" stroke-width="0.9"/><line x1="11" y1="210.28" x2="14.5" y2="210.28" stroke="#333" stroke-width="0.9"/><line x1="11" y1="204.64" x2="14.5" y2="204.64" stroke="#333" stroke-width="0.9"/><line x1="11" y1="198.99" x2="14.5" y2="198.99" stroke="#333" stroke-width="0.9"/><line x1="9" y1="193.34" x2="14.5" y2="193.34" stroke="#333" stroke-width="0.9"/><line x1="11" y1="187.69" x2="14.5" y2="187.69" stroke="#333" stroke-width="0.9"/><line x1="11" y1="182.04" x2="14.5" y2="182.04" stroke="#333" stroke-width="0.9"/><line x1="11" y1="176.40" x2="14.5" y2="176.40" stroke="#333" stroke-width="0.9"/><line x1="11" y1="170.75" x2="14.5" y2="170.75" stroke="#333" stroke-width="0.9"/><line x1="11" y1="165.10" x2="14.5" y2="165.10" stroke="#333" stroke-width="0.9"/><line x1="11" y1="159.45" x2="14.5" y2="159.45" stroke="#333" stroke-width="0.9"/><line x1="11" y1="153.80" x2="14.5" y2="153.80" stroke="#333" stroke-width="0.9"/><line x1="11" y1="148.16" x2="14.5" y2="148.16" stroke="#333" stroke-width="0.9"/><line x1="11" y1="142.51" x2="14.5" y2="142.51" stroke="#333" stroke-width="0.9"/><line x1="9" y1="136.86" x2="14.5" y2="136.86" stroke="#333" stroke-width="0.9"/><line x1="11" y1="131.21" x2="14.5" y2="131.21" stroke="#333" stroke-width="0.9"/><line x1="11" y1="125.56" x2="14.5" y2="125.56" stroke="#333" stroke-width="0.9"/><line x1="11" y1="119.92" x2="14.5" y2="119.92" stroke="#333" stroke-width="0.9"/><line x1="11" y1="114.27" x2="14.5" y2="114.27" stroke="#333" stroke-width="0.9"/><line x1="11" y1="108.62" x2="14.5" y2="108.62" stroke="#333" stroke-width="0.9"/><line x1="11" y1="102.97" x2="14.5" y2="102.97" stroke="#333" stroke-width="0.9"/><line x1="11" y1="97.32" x2="14.5" y2="97.32" stroke="#333" stroke-width="0.9"/><line x1="11" y1="91.68" x2="14.5" y2="91.68" stroke="#333" stroke-width="0.9"/><line x1="14.5" y1="89" x2="14.5" y2="525" stroke="#8a8a8a" stroke-width="1.2"/><line x1="0" y1="88.6" x2="1099" y2="88.6" stroke="#8a8a8a" stroke-width="1"/></svg>
<div class="t" style="left:42.08px;top:77.67px;font-size:6.4px;line-height:6.4px;color:#333;font-weight:normal;transform:scaleX(1.0000);">-360</div>
<div class="t" style="left:98.56px;top:77.67px;font-size:6.4px;line-height:6.4px;color:#333;font-weight:normal;transform:scaleX(1.0000);">-320</div>
<div class="t" style="left:155.04px;top:77.67px;font-size:6.4px;line-height:6.4px;color:#333;font-weight:normal;transform:scaleX(1.0000);">-280</div>
<div class="t" style="left:211.52px;top:77.67px;font-size:6.4px;line-height:6.4px;color:#333;font-weight:normal;transform:scaleX(1.0000);">-240</div>
<div class="t" style="left:268.00px;top:77.67px;font-size:6.4px;line-height:6.4px;color:#333;font-weight:normal;transform:scaleX(1.0000);">-200</div>
<div class="t" style="left:324.48px;top:77.67px;font-size:6.4px;line-height:6.4px;color:#333;font-weight:normal;transform:scaleX(1.0000);">-160</div>
<div class="t" style="left:380.96px;top:77.67px;font-size:6.4px;line-height:6.4px;color:#333;font-weight:normal;transform:scaleX(1.0000);">-120</div>
<div class="t" style="left:439.22px;top:77.67px;font-size:6.4px;line-height:6.4px;color:#333;font-weight:normal;transform:scaleX(1.0000);">-80</div>
<div class="t" style="left:495.70px;top:77.67px;font-size:6.4px;line-height:6.4px;color:#333;font-weight:normal;transform:scaleX(1.0000);">-40</div>
<div class="t" style="left:555.02px;top:77.67px;font-size:6.4px;line-height:6.4px;color:#333;font-weight:normal;transform:scaleX(1.0000);">0</div>
<div class="t" style="left:609.73px;top:77.67px;font-size:6.4px;line-height:6.4px;color:#333;font-weight:normal;transform:scaleX(1.0000);">40</div>
<div class="t" style="left:666.21px;top:77.67px;font-size:6.4px;line-height:6.4px;color:#333;font-weight:normal;transform:scaleX(1.0000);">80</div>
<div class="t" style="left:720.91px;top:77.67px;font-size:6.4px;line-height:6.4px;color:#333;font-weight:normal;transform:scaleX(1.0000);">120</div>
<div class="t" style="left:777.39px;top:77.67px;font-size:6.4px;line-height:6.4px;color:#333;font-weight:normal;transform:scaleX(1.0000);">160</div>
<div class="t" style="left:833.87px;top:77.67px;font-size:6.4px;line-height:6.4px;color:#333;font-weight:normal;transform:scaleX(1.0000);">200</div>
<div class="t" style="left:890.35px;top:77.67px;font-size:6.4px;line-height:6.4px;color:#333;font-weight:normal;transform:scaleX(1.0000);">240</div>
<div class="t" style="left:946.83px;top:77.67px;font-size:6.4px;line-height:6.4px;color:#333;font-weight:normal;transform:scaleX(1.0000);">280</div>
<div class="t" style="left:1003.31px;top:77.67px;font-size:6.4px;line-height:6.4px;color:#333;font-weight:normal;transform:scaleX(1.0000);">320</div>
<div class="t" style="left:1059.79px;top:77.67px;font-size:6.4px;line-height:6.4px;color:#333;font-weight:normal;transform:scaleX(1.0000);">360</div>
<div class="t" style="left:-1.20px;top:472.44px;font-size:6.4px;line-height:6.4px;color:#333;width:12.79px;transform:rotate(-90deg);transform-origin:50% 50%">-120</div>
<div class="t" style="left:0.58px;top:415.96px;font-size:6.4px;line-height:6.4px;color:#333;width:9.24px;transform:rotate(-90deg);transform-origin:50% 50%">-80</div>
<div class="t" style="left:0.58px;top:359.48px;font-size:6.4px;line-height:6.4px;color:#333;width:9.24px;transform:rotate(-90deg);transform-origin:50% 50%">-40</div>
<div class="t" style="left:3.42px;top:303.00px;font-size:6.4px;line-height:6.4px;color:#333;width:3.55px;transform:rotate(-90deg);transform-origin:50% 50%">0</div>
<div class="t" style="left:1.65px;top:246.52px;font-size:6.4px;line-height:6.4px;color:#333;width:7.11px;transform:rotate(-90deg);transform-origin:50% 50%">40</div>
<div class="t" style="left:1.65px;top:190.04px;font-size:6.4px;line-height:6.4px;color:#333;width:7.11px;transform:rotate(-90deg);transform-origin:50% 50%">80</div>
<div class="t" style="left:-0.13px;top:133.56px;font-size:6.4px;line-height:6.4px;color:#333;width:10.66px;transform:rotate(-90deg);transform-origin:50% 50%">120</div>
<div class="r" style="left:0px;top:77.5px;width:14.5px;height:10.0px;background:#fff;box-shadow:inset 0 0 0 1px #555"></div>
<div class="t" style="left:1.47px;top:78.96px;font-size:7.0px;line-height:7.0px;color:#222;font-weight:normal;transform:scaleX(1.0000);">mm</div>
<svg class="r" style="left:15px;top:89px" width="1084" height="426" viewBox="15 89 1084 426"><rect x="15" y="89" width="1084" height="426" fill="#d4e5d3"/><path d="M21.5 89V515 M35.5 89V515 M49.5 89V515 M63.5 89V515 M77.5 89V515 M91.5 89V515 M105.5 89V515 M119.5 89V515 M133.5 89V515 M147.5 89V515 M161.5 89V515 M176.5 89V515 M190.5 89V515 M204.5 89V515 M218.5 89V515 M232.5 89V515 M246.5 89V515 M260.5 89V515 M274.5 89V515 M288.5 89V515 M303.5 89V515 M317.5 89V515 M331.5 89V515 M345.5 89V515 M359.5 89V515 M373.5 89V515 M387.5 89V515 M401.5 89V515 M415.5 89V515 M429.5 89V515 M443.5 89V515 M458.5 89V515 M472.5 89V515 M486.5 89V515 M500.5 89V515 M514.5 89V515 M528.5 89V515 M542.5 89V515 M570.5 89V515 M585.5 89V515 M599.5 89V515 M613.5 89V515 M627.5 89V515 M641.5 89V515 M655.5 89V515 M669.5 89V515 M683.5 89V515 M697.5 89V515 M711.5 89V515 M726.5 89V515 M740.5 89V515 M754.5 89V515 M768.5 89V515 M782.5 89V515 M796.5 89V515 M810.5 89V515 M824.5 89V515 M838.5 89V515 M852.5 89V515 M867.5 89V515 M881.5 89V515 M895.5 89V515 M909.5 89V515 M923.5 89V515 M937.5 89V515 M951.5 89V515 M965.5 89V515 M979.5 89V515 M993.5 89V515 M1008.5 89V515 M1022.5 89V515 M1036.5 89V515 M1050.5 89V515 M1064.5 89V515 M1078.5 89V515 M1092.5 89V515 M15 95.5H1099 M15 109.5H1099 M15 123.5H1099 M15 137.5H1099 M15 151.5H1099 M15 165.5H1099 M15 179.5H1099 M15 193.5H1099 M15 207.5H1099 M15 222.5H1099 M15 236.5H1099 M15 250.5H1099 M15 264.5H1099 M15 278.5H1099 M15 292.5H1099 M15 320.5H1099 M15 334.5H1099 M15 348.5H1099 M15 363.5H1099 M15 377.5H1099 M15 391.5H1099 M15 405.5H1099 M15 419.5H1099 M15 433.5H1099 M15 447.5H1099 M15 461.5H1099 M15 475.5H1099 M15 489.5H1099 M15 504.5H1099" stroke="#aec2ad" stroke-width="1" fill="none"/><path d="M556.5 89V515 M15 306.5H1099" stroke="#637e62" stroke-width="1" fill="none"/><defs>
<pattern id="bp" width="3" height="3" patternUnits="userSpaceOnUse" patternTransform="rotate(35)">
<rect width="3" height="3" fill="#b26e1e"/><rect width="3" height="1" fill="#935716"/>
</pattern>
<path id="arcTop" d="M407 315 A150 150 0 0 1 707 315"/>
<path id="arcBot" d="M387 293 A170 170 0 0 0 727 293"/>
</defs>
<path d="M557.0 120.1 C583.7 120.1 616.2 120.7 640.0 121.5 C663.8 122.3 686.0 123.6 700.0 124.8 C714.0 126.0 716.7 126.3 724.0 128.4 C731.3 130.5 738.2 133.6 744.0 137.2 C749.8 140.8 754.3 145.2 758.5 150.0 C762.7 154.8 766.0 156.7 769.0 166.0 C772.0 175.3 775.0 192.0 776.5 206.0 C778.0 220.0 777.6 233.3 778.0 250.0 C778.4 266.7 778.8 284.3 778.7 306.0 C778.7 327.7 778.2 362.7 777.7 380.0 C777.2 397.3 776.9 401.0 776.0 410.0 C775.1 419.0 774.2 426.7 772.5 434.0 C770.8 441.3 769.1 448.4 766.0 454.0 C762.9 459.6 759.1 463.3 753.7 467.7 C748.3 472.1 742.6 477.0 733.6 480.5 C724.6 484.0 715.6 486.7 700.0 488.5 C684.4 490.3 663.8 490.8 640.0 491.5 C616.2 492.2 583.7 493.0 557.0 493.0 C530.3 493.0 502.8 492.2 480.0 491.5 C457.2 490.8 435.2 489.8 420.0 488.5 C404.8 487.2 397.7 486.1 389.0 483.7 C380.3 481.3 374.0 478.4 368.0 474.0 C362.0 469.6 356.8 463.3 352.8 457.3 C348.8 451.3 346.4 445.9 344.0 438.0 C341.6 430.1 339.6 419.7 338.4 410.0 C337.2 400.3 337.6 397.3 337.0 380.0 C336.4 362.7 335.1 327.7 335.0 306.0 C334.9 284.3 335.9 266.6 336.5 250.0 C337.1 233.4 337.6 218.0 338.4 206.2 C339.2 194.4 339.5 187.0 341.2 179.0 C342.9 171.0 345.7 164.0 348.8 158.0 C351.9 152.0 355.5 147.2 360.0 142.8 C364.5 138.4 370.4 134.3 376.0 131.6 C381.6 128.9 386.7 128.0 393.7 126.8 C400.7 125.6 403.4 125.3 417.8 124.4 C432.2 123.5 456.8 122.2 480.0 121.5 C503.2 120.8 530.3 120.1 557.0 120.1Z" fill="none" stroke="#d8c8a0" stroke-width="15.2"/>
<path d="M557.0 120.1 C583.7 120.1 616.2 120.7 640.0 121.5 C663.8 122.3 686.0 123.6 700.0 124.8 C714.0 126.0 716.7 126.3 724.0 128.4 C731.3 130.5 738.2 133.6 744.0 137.2 C749.8 140.8 754.3 145.2 758.5 150.0 C762.7 154.8 766.0 156.7 769.0 166.0 C772.0 175.3 775.0 192.0 776.5 206.0 C778.0 220.0 777.6 233.3 778.0 250.0 C778.4 266.7 778.8 284.3 778.7 306.0 C778.7 327.7 778.2 362.7 777.7 380.0 C777.2 397.3 776.9 401.0 776.0 410.0 C775.1 419.0 774.2 426.7 772.5 434.0 C770.8 441.3 769.1 448.4 766.0 454.0 C762.9 459.6 759.1 463.3 753.7 467.7 C748.3 472.1 742.6 477.0 733.6 480.5 C724.6 484.0 715.6 486.7 700.0 488.5 C684.4 490.3 663.8 490.8 640.0 491.5 C616.2 492.2 583.7 493.0 557.0 493.0 C530.3 493.0 502.8 492.2 480.0 491.5 C457.2 490.8 435.2 489.8 420.0 488.5 C404.8 487.2 397.7 486.1 389.0 483.7 C380.3 481.3 374.0 478.4 368.0 474.0 C362.0 469.6 356.8 463.3 352.8 457.3 C348.8 451.3 346.4 445.9 344.0 438.0 C341.6 430.1 339.6 419.7 338.4 410.0 C337.2 400.3 337.6 397.3 337.0 380.0 C336.4 362.7 335.1 327.7 335.0 306.0 C334.9 284.3 335.9 266.6 336.5 250.0 C337.1 233.4 337.6 218.0 338.4 206.2 C339.2 194.4 339.5 187.0 341.2 179.0 C342.9 171.0 345.7 164.0 348.8 158.0 C351.9 152.0 355.5 147.2 360.0 142.8 C364.5 138.4 370.4 134.3 376.0 131.6 C381.6 128.9 386.7 128.0 393.7 126.8 C400.7 125.6 403.4 125.3 417.8 124.4 C432.2 123.5 456.8 122.2 480.0 121.5 C503.2 120.8 530.3 120.1 557.0 120.1Z" fill="none" stroke="#4e3818" stroke-width="15.2" stroke-dasharray="1.4 0.9"/>
<path d="M557.0 120.1 C583.7 120.1 616.2 120.7 640.0 121.5 C663.8 122.3 686.0 123.6 700.0 124.8 C714.0 126.0 716.7 126.3 724.0 128.4 C731.3 130.5 738.2 133.6 744.0 137.2 C749.8 140.8 754.3 145.2 758.5 150.0 C762.7 154.8 766.0 156.7 769.0 166.0 C772.0 175.3 775.0 192.0 776.5 206.0 C778.0 220.0 777.6 233.3 778.0 250.0 C778.4 266.7 778.8 284.3 778.7 306.0 C778.7 327.7 778.2 362.7 777.7 380.0 C777.2 397.3 776.9 401.0 776.0 410.0 C775.1 419.0 774.2 426.7 772.5 434.0 C770.8 441.3 769.1 448.4 766.0 454.0 C762.9 459.6 759.1 463.3 753.7 467.7 C748.3 472.1 742.6 477.0 733.6 480.5 C724.6 484.0 715.6 486.7 700.0 488.5 C684.4 490.3 663.8 490.8 640.0 491.5 C616.2 492.2 583.7 493.0 557.0 493.0 C530.3 493.0 502.8 492.2 480.0 491.5 C457.2 490.8 435.2 489.8 420.0 488.5 C404.8 487.2 397.7 486.1 389.0 483.7 C380.3 481.3 374.0 478.4 368.0 474.0 C362.0 469.6 356.8 463.3 352.8 457.3 C348.8 451.3 346.4 445.9 344.0 438.0 C341.6 430.1 339.6 419.7 338.4 410.0 C337.2 400.3 337.6 397.3 337.0 380.0 C336.4 362.7 335.1 327.7 335.0 306.0 C334.9 284.3 335.9 266.6 336.5 250.0 C337.1 233.4 337.6 218.0 338.4 206.2 C339.2 194.4 339.5 187.0 341.2 179.0 C342.9 171.0 345.7 164.0 348.8 158.0 C351.9 152.0 355.5 147.2 360.0 142.8 C364.5 138.4 370.4 134.3 376.0 131.6 C381.6 128.9 386.7 128.0 393.7 126.8 C400.7 125.6 403.4 125.3 417.8 124.4 C432.2 123.5 456.8 122.2 480.0 121.5 C503.2 120.8 530.3 120.1 557.0 120.1Z" fill="none" stroke="url(#bp)" stroke-width="13"/>
<text font-family="Liberation Sans" font-size="48" fill="#da3a70" stroke="#b8275a" stroke-width="1.1" letter-spacing="-1.8"><textPath href="#arcTop" startOffset="50%" text-anchor="middle"><tspan dx="-3 2 -1 -3 0.5 0 -0.5 2.5 2 -0.5 1 0">My beautiful</tspan></textPath></text>
<text font-family="Liberation Sans" font-size="48" fill="#da3a70" stroke="#b8275a" stroke-width="1.1" letter-spacing="2.5"><textPath href="#arcBot" startOffset="50%" text-anchor="middle"><tspan dx="2 0 0 0.5 4 1.5 2">Flowers</tspan></textPath></text>
<path d="M417.7 294.9 C417.9 292.1 418.9 282.3 421.5 278.2 C424.1 274.1 428.5 273.4 433.0 270.5 C437.5 267.6 443.8 262.8 448.5 260.9 C453.2 259.0 457.7 258.5 461.3 259.0 C464.9 259.5 468.4 262.1 470.3 264.1 C472.2 266.1 473.0 270.4 472.8 271.2 C472.6 272.0 470.9 270.2 469.0 269.2 C467.1 268.2 464.7 265.6 461.3 265.4 C457.9 265.2 452.8 266.1 448.5 268.0 C444.2 269.9 439.5 274.2 435.6 277.0 C431.8 279.8 427.9 281.6 425.4 284.6 C422.8 287.6 421.6 293.2 420.3 294.9 C419.0 296.6 417.5 297.7 417.7 294.9Z" fill="#4a8d40" stroke="#2f6a2b" stroke-width="0.8"/>
<path d="M437.6 316.7 C436.7 315.2 432.1 309.2 433.0 305.1 C433.9 301.0 439.0 295.9 443.3 292.3 C447.6 288.7 454.2 284.9 458.7 283.3 C463.2 281.7 467.1 282.1 470.3 282.7 C473.5 283.3 476.3 284.9 478.0 287.2 C479.7 289.4 480.9 295.3 480.5 296.2 C480.1 297.1 478.2 293.5 475.4 292.3 C472.6 291.1 467.9 289.0 463.8 289.1 C459.7 289.2 454.8 290.6 451.0 293.0 C447.2 295.4 442.9 300.3 440.8 303.8 C438.7 307.3 439.1 312.0 438.6 314.1 C438.1 316.2 438.5 318.2 437.6 316.7Z" fill="#4a8d40" stroke="#2f6a2b" stroke-width="0.8"/>
<path d="M472.5 233.0 C471.7 230.8 462.8 223.2 458.0 222.0 C453.2 220.8 448.0 223.3 444.0 226.0 C440.0 228.7 436.2 233.7 434.0 238.0 C431.8 242.3 431.0 246.7 430.5 252.0 C430.0 257.3 429.9 263.7 431.0 270.0 C432.1 276.3 434.2 284.0 437.0 290.0 C439.8 296.0 443.8 300.7 448.0 306.0 C452.2 311.3 457.5 317.3 462.0 322.0 C466.5 326.7 471.5 331.2 475.0 334.0 C478.5 336.8 481.2 338.7 483.0 339.0 C484.8 339.3 486.8 338.8 486.0 336.0 C485.2 333.2 481.3 326.7 478.0 322.0 C474.7 317.3 470.0 312.8 466.0 308.0 C462.0 303.2 457.2 297.8 454.0 293.0 C450.8 288.2 448.1 284.2 446.5 279.0 C444.9 273.8 444.6 267.2 444.5 262.0 C444.4 256.8 444.6 251.9 446.0 248.0 C447.4 244.1 450.2 240.6 453.0 238.5 C455.8 236.4 459.8 236.4 463.0 235.5 C466.2 234.6 473.3 235.2 472.5 233.0Z" fill="#4a8d40" stroke="#2f6a2b" stroke-width="0.9"/>
<path d="M464 229.5 C452 229 442 238 439 252 C437 270 443 288 455 303 C464 315 472 324 480 333" fill="none" stroke="#7cb86a" stroke-width="1.5" opacity="0.75"/>
<path d="M556.8 392 C548 376 535 361 515.8 353 C500 348 484 351 477 362 C471 372 474 388 484 393.5 C492 396 499 388 495.5 377" fill="none" stroke="#4a8d40" stroke-width="2.1"/>
<path d="M484 337 C498 340 510 347 524 358" fill="none" stroke="#4a8d40" stroke-width="1.8"/>
<path d="M477.6 340 C490 340 502 344 516 352" fill="none" stroke="#4a8d40" stroke-width="1.5"/>
<path d="M503.0 298.1 C501.2 297.9 498.7 302.0 497.0 305.0 C495.3 308.0 493.5 311.8 493.0 316.0 C492.5 320.2 492.8 325.7 494.0 330.0 C495.2 334.3 497.0 338.7 500.0 342.0 C503.0 345.3 507.5 347.5 512.0 350.0 C516.5 352.5 525.0 357.7 527.0 357.0 C529.0 356.3 525.2 350.0 524.0 346.0 C522.8 342.0 521.7 337.7 520.0 333.0 C518.3 328.3 516.0 322.5 514.0 318.0 C512.0 313.5 509.8 309.3 508.0 306.0 C506.2 302.7 504.8 298.3 503.0 298.1Z" fill="#4a8d40" stroke="#2f6a2b" stroke-width="0.9"/>
<path d="M503 310 C500 322 504 336 518 348" fill="none" stroke="#b0d4a0" stroke-width="1.6" opacity="0.7"/>
<path d="M484.0 292.0 C481.9 292.4 478.1 300.7 476.3 304.2 C474.5 307.7 473.5 310.0 473.1 313.2 C472.7 316.4 472.8 320.1 473.7 323.5 C474.6 326.9 477.1 331.3 478.8 333.7 C480.5 336.1 481.9 337.4 484.0 337.6 C486.1 337.8 490.1 336.9 491.7 335.0 C493.3 333.1 493.6 329.4 493.6 326.0 C493.6 322.6 492.4 318.6 491.7 314.5 C490.9 310.4 490.4 305.4 489.1 301.7 C487.8 297.9 486.1 291.6 484.0 292.0Z" fill="#dc4c7c" stroke="#b22a5a" stroke-width="0.8"/>
<path d="M483.3 306 C482.5 311 482.5 315 483.3 319" fill="none" stroke="#f6d6e0" stroke-width="1.4"/>
<path d="M434.6 360.6 C435.2 358.2 440.5 349.4 444.2 345.3 C447.9 341.2 452.7 338.1 457.0 336.3 C461.3 334.5 466.7 334.2 469.9 334.4 C473.1 334.6 475.0 336.7 476.3 337.6 C477.6 338.6 477.6 338.8 477.6 340.1 C477.6 341.4 478.0 343.2 476.3 345.3 C474.6 347.4 471.2 351.1 467.3 353.0 C463.4 354.9 457.7 355.7 453.2 356.8 C448.7 357.9 443.5 358.8 440.4 359.4 C437.3 360.0 434.0 363.0 434.6 360.6Z" fill="#dc4c7c" stroke="#b22a5a" stroke-width="0.8"/>
<path d="M452 349.5 C457 347 463 345 469 344" fill="none" stroke="#f6d6e0" stroke-width="1.6"/>
<path d="M524.2 235.6 C527 229 532 224 540.8 222.8 C546 224 547 231 543.4 235.6 C541 237 539 237.5 537 237" fill="none" stroke="#4a8d40" stroke-width="1.9"/>
<path d="M517.7 266.4 C519 271 520.5 275 522.2 279" fill="none" stroke="#4a8d40" stroke-width="1.6"/>
<path d="M507.5 284.4 C511 280 516 278.5 520.3 279.2 C517 283 512 285 507.5 284.4 Z" fill="#4a8d40" stroke="#2f6a2b" stroke-width="0.6"/>
<path d="M510.7 240.4 C509.7 237.8 505.2 231.1 502.2 229.2 C499.2 227.3 495.7 228.6 492.9 228.8 C490.1 229.0 486.4 229.1 485.7 230.5 C485.0 231.9 487.2 235.0 488.7 237.3 C490.1 239.6 491.2 243.3 494.6 244.5 C497.9 245.7 505.9 245.3 508.6 244.6 C511.3 243.9 511.8 242.9 510.7 240.4Z" fill="#c92258" stroke="#a01a48" stroke-width="0.7"/><path d="M506.7 237.8 Q498.9 232.3 490.8 230.9" fill="none" stroke="#ef8aae" stroke-width="2.6" opacity="0.55" stroke-linecap="round"/>
<path d="M517.5 241.5 C519.8 240.4 525.5 236.1 526.9 233.4 C528.3 230.6 526.4 227.6 525.8 225.2 C525.1 222.8 524.4 219.5 522.9 219.0 C521.4 218.5 518.8 220.6 516.8 222.0 C514.8 223.5 511.4 224.7 510.8 227.7 C510.2 230.7 511.9 237.7 513.0 240.0 C514.1 242.3 515.2 242.7 517.5 241.5Z" fill="#c92258" stroke="#a01a48" stroke-width="0.7"/><path d="M519.3 237.9 Q523.3 230.7 523.3 223.5" fill="none" stroke="#ef8aae" stroke-width="2.6" opacity="0.55" stroke-linecap="round"/>
<path d="M518.3 247.5 C520.2 249.6 526.7 254.4 530.1 255.2 C533.6 256.1 536.5 253.6 539.1 252.5 C541.6 251.4 545.1 250.1 545.3 248.5 C545.5 246.9 542.4 244.8 540.2 243.1 C538.1 241.4 535.8 238.3 532.2 238.3 C528.7 238.2 521.2 241.3 518.9 242.8 C516.6 244.4 516.4 245.5 518.3 247.5Z" fill="#c92258" stroke="#a01a48" stroke-width="0.7"/><path d="M523.0 248.6 Q532.2 251.2 540.4 249.8" fill="none" stroke="#ef8aae" stroke-width="2.6" opacity="0.55" stroke-linecap="round"/>
<path d="M510.2 248.3 C507.9 249.8 502.0 255.2 500.7 258.4 C499.3 261.6 501.5 264.8 502.3 267.4 C503.1 270.1 504.0 273.6 505.6 274.1 C507.2 274.6 509.8 272.0 511.9 270.1 C514.0 268.3 517.5 266.7 518.0 263.3 C518.5 259.9 516.4 252.2 515.1 249.7 C513.8 247.2 512.6 246.9 510.2 248.3Z" fill="#c92258" stroke="#a01a48" stroke-width="0.7"/><path d="M508.5 252.6 Q504.6 261.1 504.9 269.1" fill="none" stroke="#ef8aae" stroke-width="2.6" opacity="0.55" stroke-linecap="round"/>
<circle cx="513.9" cy="244.6" r="7" fill="#c42eb8" stroke="#8e1e86" stroke-width="0.6"/>
<path d="M508 242 h11.5 M508 245 h11.5 M509 248 h9.5" stroke="#de6ede" stroke-width="0.9"/>
<g transform="translate(1113.6 0) scale(-1 1)"><path d="M417.7 294.9 C417.9 292.1 418.9 282.3 421.5 278.2 C424.1 274.1 428.5 273.4 433.0 270.5 C437.5 267.6 443.8 262.8 448.5 260.9 C453.2 259.0 457.7 258.5 461.3 259.0 C464.9 259.5 468.4 262.1 470.3 264.1 C472.2 266.1 473.0 270.4 472.8 271.2 C472.6 272.0 470.9 270.2 469.0 269.2 C467.1 268.2 464.7 265.6 461.3 265.4 C457.9 265.2 452.8 266.1 448.5 268.0 C444.2 269.9 439.5 274.2 435.6 277.0 C431.8 279.8 427.9 281.6 425.4 284.6 C422.8 287.6 421.6 293.2 420.3 294.9 C419.0 296.6 417.5 297.7 417.7 294.9Z" fill="#4a8d40" stroke="#2f6a2b" stroke-width="0.8"/>
<path d="M437.6 316.7 C436.7 315.2 432.1 309.2 433.0 305.1 C433.9 301.0 439.0 295.9 443.3 292.3 C447.6 288.7 454.2 284.9 458.7 283.3 C463.2 281.7 467.1 282.1 470.3 282.7 C473.5 283.3 476.3 284.9 478.0 287.2 C479.7 289.4 480.9 295.3 480.5 296.2 C480.1 297.1 478.2 293.5 475.4 292.3 C472.6 291.1 467.9 289.0 463.8 289.1 C459.7 289.2 454.8 290.6 451.0 293.0 C447.2 295.4 442.9 300.3 440.8 303.8 C438.7 307.3 439.1 312.0 438.6 314.1 C438.1 316.2 438.5 318.2 437.6 316.7Z" fill="#4a8d40" stroke="#2f6a2b" stroke-width="0.8"/>
<path d="M472.5 233.0 C471.7 230.8 462.8 223.2 458.0 222.0 C453.2 220.8 448.0 223.3 444.0 226.0 C440.0 228.7 436.2 233.7 434.0 238.0 C431.8 242.3 431.0 246.7 430.5 252.0 C430.0 257.3 429.9 263.7 431.0 270.0 C432.1 276.3 434.2 284.0 437.0 290.0 C439.8 296.0 443.8 300.7 448.0 306.0 C452.2 311.3 457.5 317.3 462.0 322.0 C466.5 326.7 471.5 331.2 475.0 334.0 C478.5 336.8 481.2 338.7 483.0 339.0 C484.8 339.3 486.8 338.8 486.0 336.0 C485.2 333.2 481.3 326.7 478.0 322.0 C474.7 317.3 470.0 312.8 466.0 308.0 C462.0 303.2 457.2 297.8 454.0 293.0 C450.8 288.2 448.1 284.2 446.5 279.0 C444.9 273.8 444.6 267.2 444.5 262.0 C444.4 256.8 444.6 251.9 446.0 248.0 C447.4 244.1 450.2 240.6 453.0 238.5 C455.8 236.4 459.8 236.4 463.0 235.5 C466.2 234.6 473.3 235.2 472.5 233.0Z" fill="#4a8d40" stroke="#2f6a2b" stroke-width="0.9"/>
<path d="M464 229.5 C452 229 442 238 439 252 C437 270 443 288 455 303 C464 315 472 324 480 333" fill="none" stroke="#7cb86a" stroke-width="1.5" opacity="0.75"/>
<path d="M556.8 392 C548 376 535 361 515.8 353 C500 348 484 351 477 362 C471 372 474 388 484 393.5 C492 396 499 388 495.5 377" fill="none" stroke="#4a8d40" stroke-width="2.1"/>
<path d="M484 337 C498 340 510 347 524 358" fill="none" stroke="#4a8d40" stroke-width="1.8"/>
<path d="M477.6 340 C490 340 502 344 516 352" fill="none" stroke="#4a8d40" stroke-width="1.5"/>
<path d="M503.0 298.1 C501.2 297.9 498.7 302.0 497.0 305.0 C495.3 308.0 493.5 311.8 493.0 316.0 C492.5 320.2 492.8 325.7 494.0 330.0 C495.2 334.3 497.0 338.7 500.0 342.0 C503.0 345.3 507.5 347.5 512.0 350.0 C516.5 352.5 525.0 357.7 527.0 357.0 C529.0 356.3 525.2 350.0 524.0 346.0 C522.8 342.0 521.7 337.7 520.0 333.0 C518.3 328.3 516.0 322.5 514.0 318.0 C512.0 313.5 509.8 309.3 508.0 306.0 C506.2 302.7 504.8 298.3 503.0 298.1Z" fill="#4a8d40" stroke="#2f6a2b" stroke-width="0.9"/>
<path d="M503 310 C500 322 504 336 518 348" fill="none" stroke="#b0d4a0" stroke-width="1.6" opacity="0.7"/>
<path d="M484.0 292.0 C481.9 292.4 478.1 300.7 476.3 304.2 C474.5 307.7 473.5 310.0 473.1 313.2 C472.7 316.4 472.8 320.1 473.7 323.5 C474.6 326.9 477.1 331.3 478.8 333.7 C480.5 336.1 481.9 337.4 484.0 337.6 C486.1 337.8 490.1 336.9 491.7 335.0 C493.3 333.1 493.6 329.4 493.6 326.0 C493.6 322.6 492.4 318.6 491.7 314.5 C490.9 310.4 490.4 305.4 489.1 301.7 C487.8 297.9 486.1 291.6 484.0 292.0Z" fill="#dc4c7c" stroke="#b22a5a" stroke-width="0.8"/>
<path d="M483.3 306 C482.5 311 482.5 315 483.3 319" fill="none" stroke="#f6d6e0" stroke-width="1.4"/>
<path d="M434.6 360.6 C435.2 358.2 440.5 349.4 444.2 345.3 C447.9 341.2 452.7 338.1 457.0 336.3 C461.3 334.5 466.7 334.2 469.9 334.4 C473.1 334.6 475.0 336.7 476.3 337.6 C477.6 338.6 477.6 338.8 477.6 340.1 C477.6 341.4 478.0 343.2 476.3 345.3 C474.6 347.4 471.2 351.1 467.3 353.0 C463.4 354.9 457.7 355.7 453.2 356.8 C448.7 357.9 443.5 358.8 440.4 359.4 C437.3 360.0 434.0 363.0 434.6 360.6Z" fill="#dc4c7c" stroke="#b22a5a" stroke-width="0.8"/>
<path d="M452 349.5 C457 347 463 345 469 344" fill="none" stroke="#f6d6e0" stroke-width="1.6"/>
<path d="M524.2 235.6 C527 229 532 224 540.8 222.8 C546 224 547 231 543.4 235.6 C541 237 539 237.5 537 237" fill="none" stroke="#4a8d40" stroke-width="1.9"/>
<path d="M517.7 266.4 C519 271 520.5 275 522.2 279" fill="none" stroke="#4a8d40" stroke-width="1.6"/>
<path d="M507.5 284.4 C511 280 516 278.5 520.3 279.2 C517 283 512 285 507.5 284.4 Z" fill="#4a8d40" stroke="#2f6a2b" stroke-width="0.6"/>
<path d="M510.7 240.4 C509.7 237.8 505.2 231.1 502.2 229.2 C499.2 227.3 495.7 228.6 492.9 228.8 C490.1 229.0 486.4 229.1 485.7 230.5 C485.0 231.9 487.2 235.0 488.7 237.3 C490.1 239.6 491.2 243.3 494.6 244.5 C497.9 245.7 505.9 245.3 508.6 244.6 C511.3 243.9 511.8 242.9 510.7 240.4Z" fill="#c92258" stroke="#a01a48" stroke-width="0.7"/><path d="M506.7 237.8 Q498.9 232.3 490.8 230.9" fill="none" stroke="#ef8aae" stroke-width="2.6" opacity="0.55" stroke-linecap="round"/>
<path d="M517.5 241.5 C519.8 240.4 525.5 236.1 526.9 233.4 C528.3 230.6 526.4 227.6 525.8 225.2 C525.1 222.8 524.4 219.5 522.9 219.0 C521.4 218.5 518.8 220.6 516.8 222.0 C514.8 223.5 511.4 224.7 510.8 227.7 C510.2 230.7 511.9 237.7 513.0 240.0 C514.1 242.3 515.2 242.7 517.5 241.5Z" fill="#c92258" stroke="#a01a48" stroke-width="0.7"/><path d="M519.3 237.9 Q523.3 230.7 523.3 223.5" fill="none" stroke="#ef8aae" stroke-width="2.6" opacity="0.55" stroke-linecap="round"/>
<path d="M518.3 247.5 C520.2 249.6 526.7 254.4 530.1 255.2 C533.6 256.1 536.5 253.6 539.1 252.5 C541.6 251.4 545.1 250.1 545.3 248.5 C545.5 246.9 542.4 244.8 540.2 243.1 C538.1 241.4 535.8 238.3 532.2 238.3 C528.7 238.2 521.2 241.3 518.9 242.8 C516.6 244.4 516.4 245.5 518.3 247.5Z" fill="#c92258" stroke="#a01a48" stroke-width="0.7"/><path d="M523.0 248.6 Q532.2 251.2 540.4 249.8" fill="none" stroke="#ef8aae" stroke-width="2.6" opacity="0.55" stroke-linecap="round"/>
<path d="M510.2 248.3 C507.9 249.8 502.0 255.2 500.7 258.4 C499.3 261.6 501.5 264.8 502.3 267.4 C503.1 270.1 504.0 273.6 505.6 274.1 C507.2 274.6 509.8 272.0 511.9 270.1 C514.0 268.3 517.5 266.7 518.0 263.3 C518.5 259.9 516.4 252.2 515.1 249.7 C513.8 247.2 512.6 246.9 510.2 248.3Z" fill="#c92258" stroke="#a01a48" stroke-width="0.7"/><path d="M508.5 252.6 Q504.6 261.1 504.9 269.1" fill="none" stroke="#ef8aae" stroke-width="2.6" opacity="0.55" stroke-linecap="round"/>
<circle cx="513.9" cy="244.6" r="7" fill="#c42eb8" stroke="#8e1e86" stroke-width="0.6"/>
<path d="M508 242 h11.5 M508 245 h11.5 M509 248 h9.5" stroke="#de6ede" stroke-width="0.9"/></g>
<path d="M556.8 251.3 C552.6 251.3 548.1 252.4 544.1 254.5 C540.1 256.6 536.1 260.9 532.9 264.1 C529.7 267.3 527.3 270.0 524.9 273.7 C522.5 277.4 519.8 282.2 518.5 286.5 C517.2 290.8 516.4 295.9 516.9 299.4 C517.4 302.9 519.6 305.7 521.7 307.4 C523.8 309.1 519.3 309.1 529.7 309.5 C540.1 309.9 573.5 309.9 583.9 309.5 C594.3 309.1 589.8 309.1 591.9 307.4 C594.0 305.7 596.2 302.9 596.7 299.4 C597.2 295.9 596.4 290.8 595.1 286.5 C593.8 282.2 591.1 277.4 588.7 273.7 C586.3 270.0 583.9 267.3 580.7 264.1 C577.5 260.9 573.5 256.6 569.5 254.5 C565.5 252.4 561.0 251.3 556.8 251.3Z" fill="#da3c6e" stroke="#b02456" stroke-width="1.5" stroke-dasharray="2.5 1.5"/>
<path d="M523 298 C526 282 538 268 556.8 262 C575.6 268 587.6 282 590.6 298 M521 287 C526 272 540 260 556.8 256 C573.6 260 587.6 272 592.6 287" fill="none" stroke="#c02858" stroke-width="1" opacity="0.6"/>
<path d="M556.8 274 C553 276 546 281 540 287 L528 300 Q525.5 306 530 309 L547 315.5 L556.8 304.5 L566.6 315.5 L583.6 309 Q588.1 306 585.6 300 L573.6 287 C567.6 281 560.6 276 556.8 274 Z" fill="#c632c6"/>
<path d="M536 292 L556.8 280 L577.6 292 M531 301 L556.8 287 L582.6 301 M540 309 L556.8 296 L573.6 309" fill="none" stroke="#e060e0" stroke-width="1.5"/>
<path d="M529.8 310.4 C528.5 312.4 530.3 317.6 532.0 321.0 C533.7 324.4 536.0 328.4 540.0 331.0 C544.0 333.6 550.4 336.3 555.7 336.3 C561.0 336.3 567.6 333.6 571.6 331.0 C575.6 328.4 577.6 324.4 579.6 321.0 C581.6 317.6 584.9 312.4 583.6 310.4 C582.3 308.4 575.3 308.6 572.0 309.0 C568.7 309.4 566.7 313.4 564.0 312.5 C561.3 311.6 558.4 303.6 555.7 303.6 C553.0 303.6 550.6 311.6 548.0 312.5 C545.4 313.4 543.0 309.4 540.0 309.0 C537.0 308.6 531.1 308.4 529.8 310.4Z" fill="#438a3c" stroke="#2f6a2b" stroke-width="0.8"/>
<path d="M531 316 q3 -1.5 6 0 t6 0 t6 0 t6 0 t6 0 t6 0 t6 0 t6 0 t3.6 0 M533 322 q3 -1.5 6 0 t6 0 t6 0 t6 0 t6 0 t6 0 t6 0 t5.6 0 M537 328 q3 -1.5 6 0 t6 0 t6 0 t6 0 t6 0 t6 0 t3.6 0 M543 333 q3 -1.2 6 0 t6 0 t6 0 t6 0 t3.6 0" fill="none" stroke="#72b262" stroke-width="1.2"/>
<path d="M556.8 336 V396" stroke="#4f9444" stroke-width="2"/>
<path d="M555.8 383 C544 376 536 360 537.5 338 C548 345 557 360 555.8 383 Z" fill="#4f9444" stroke="#3f7f36" stroke-width="0.8"/>
<path d="M557.5 362 C563 350 573 337 587 329.5 C586 345 576 358 557.5 362 Z" fill="#4f9444" stroke="#3f7f36" stroke-width="0.8"/></svg>
<div class="r" style="left:1099px;top:89px;width:11px;height:438px;background:#f0f0f0"></div>
<div class="r" style="left:1100px;top:240px;width:8.5px;height:122px;background:#cdcdcd"></div>
<svg class="r" style="left:1099px;top:89px" width="11" height="10"><path d="M3 6.5 l2.5 -2.5 l2.5 2.5" fill="none" stroke="#606060" stroke-width="1.1"/></svg>
<svg class="r" style="left:1099px;top:505px" width="11" height="10"><path d="M3 3.5 l2.5 2.5 l2.5 -2.5" fill="none" stroke="#606060" stroke-width="1.1"/></svg>
<div class="r" style="left:15px;top:515px;width:1084px;height:12px;background:#f0f0f0"></div>
<div class="r" style="left:0px;top:525px;width:15px;height:2px;background:#f0f0f0"></div>
<div class="r" style="left:15px;top:515px;width:1084px;height:10px;background:#f0f0f0"></div>
<div class="r" style="left:147px;top:516px;width:819px;height:7.5px;background:#cdcdcd"></div>
<svg class="r" style="left:15px;top:515px" width="10" height="10"><path d="M6.5 2.5 l-2.5 2.5 l2.5 2.5" fill="none" stroke="#606060" stroke-width="1.1"/></svg>
<svg class="r" style="left:1089px;top:515px" width="10" height="10"><path d="M3.5 2.5 l2.5 2.5 l-2.5 2.5" fill="none" stroke="#606060" stroke-width="1.1"/></svg>
<div class="r" style="left:0px;top:527.5px;width:1110px;height:1.0px;background:#c8c8c8"></div>
<div class="r" style="left:0px;top:527px;width:1110px;height:85px;background:#f0f0f0"></div>
<div class="r" style="left:12px;top:530.5px;width:1095.5px;height:80.0px;background:#ffffff;box-shadow:inset 0 0 0 1px #a0a0a0"></div>
<svg class="r" style="left:2px;top:530px" width="8" height="7"><path d="M1.5 1.5 L5.5 5.5 M5.5 1.5 L1.5 5.5" stroke="#222" stroke-width="1.2"/></svg>
<div class="r" style="left:4.5px;top:539px;width:1.0px;height:2px;background:#999"></div>
<div class="t" style="left:-11.68px;top:562.80px;width:33.95px;font-size:7.4px;line-height:7.4px;color:#1a1a1a;-webkit-text-stroke:0.12px #1a1a1a;transform:rotate(90deg) scaleX(0.972);transform-origin:50% 50%">Object List</div>
<div class="r" style="left:3px;top:586px;width:4px;height:22px;background:#c8c8c8"></div>
<div class="r" style="left:1096.5px;top:531.5px;width:10.0px;height:78.0px;background:#f0f0f0"></div>
<div class="r" style="left:1097.5px;top:581px;width:8.5px;height:17.299999999999955px;background:#cdcdcd"></div>
<svg class="r" style="left:1096.5px;top:532px" width="10" height="10"><path d="M2.5 6.5 l2.5 -2.5 l2.5 2.5" fill="none" stroke="#606060" stroke-width="1.1"/></svg>
<svg class="r" style="left:1096.5px;top:599px" width="10" height="10"><path d="M2.5 3.5 l2.5 2.5 l2.5 -2.5" fill="none" stroke="#606060" stroke-width="1.1"/></svg>
<div class="r" style="left:13px;top:531.5px;width:1083.5px;height:78px;overflow:hidden"><svg width="1083.5" height="78" viewBox="13 531.5 1083.5 78" style="position:absolute;left:0;top:0"><rect x="17.5" y="513.8" width="40.5" height="32.2" fill="#fff" stroke="#3a3a3a" stroke-width="0.9"/><line x1="28.5" y1="513.8" x2="28.5" y2="546.0" stroke="#3a3a3a" stroke-width="0.8"/><text x="19.5" y="533.8" font-size="4" fill="#a05030" font-family="Liberation Sans">80</text><path d="M18.5 540.3 q2.5 -4 4.5 0 q2.5 4 4.5 0 q-2 -4 -4.5 0 q-2.5 4 -4.5 0 z" fill="none" stroke="#3040c0" stroke-width="0.9"/><path d="M18.5 540.3 h9" stroke="#3040c0" stroke-width="0.6"/><path d="M29.0 529.8 h29 a14.5 14 0 0 1 -29 0z" fill="#de3ad8"/><text x="36.0" y="556.6" font-size="6.8" fill="#333" text-anchor="middle" font-family="Liberation Sans">73</text><rect x="17.5" y="564.3" width="40.5" height="32.2" fill="#fff" stroke="#3a3a3a" stroke-width="0.9"/><line x1="28.5" y1="564.3" x2="28.5" y2="596.5" stroke="#3a3a3a" stroke-width="0.8"/><path d="M23.0 567.3 v5.5" stroke="#333" stroke-width="0.9"/><circle cx="23.0" cy="572.8" r="0.9" fill="#333"/><path d="M18.5 574.3 q1 -1 2 0 t2 0 t2 0 t2 0 t2 0" fill="none" stroke="#4a5ad0" stroke-width="0.7"/><path d="M21.5 577.3 l3 5 M24.5 577.3 l-3 5" stroke="#333" stroke-width="0.8"/><circle cx="21.5" cy="583.3" r="1.2" fill="none" stroke="#a06040" stroke-width="0.7"/><circle cx="24.5" cy="583.3" r="1.2" fill="none" stroke="#a06040" stroke-width="0.7"/><path d="M18.5 590.8 q2.5 -4 4.5 0 q2.5 4 4.5 0 q-2 -4 -4.5 0 q-2.5 4 -4.5 0 z" fill="none" stroke="#3040c0" stroke-width="0.9"/><path d="M18.5 590.8 h9" stroke="#3040c0" stroke-width="0.6"/><text x="36.0" y="605.8" font-size="6.8" fill="#333" text-anchor="middle" font-family="Liberation Sans">97</text><path d="M34.5 565.3 L30.5 586.3 L56.5 590.3 L55.5 594.3" fill="none" stroke="#a04060" stroke-width="0.5"/><rect x="62.6" y="513.8" width="40.5" height="32.2" fill="#fff" stroke="#3a3a3a" stroke-width="0.9"/><line x1="73.6" y1="513.8" x2="73.6" y2="546.0" stroke="#3a3a3a" stroke-width="0.8"/><text x="64.6" y="533.8" font-size="4" fill="#a05030" font-family="Liberation Sans">80</text><path d="M63.6 540.3 q2.5 -4 4.5 0 q2.5 4 4.5 0 q-2 -4 -4.5 0 q-2.5 4 -4.5 0 z" fill="none" stroke="#3040c0" stroke-width="0.9"/><path d="M63.6 540.3 h9" stroke="#3040c0" stroke-width="0.6"/><circle cx="79.6" cy="530.8" r="3" fill="#e02020"/><path d="M77.6 531.8 l6 12 M80.6 531.8 l12 6 l-4 -7" fill="none" stroke="#c04060" stroke-width="0.5"/><text x="81.1" y="556.6" font-size="6.8" fill="#333" text-anchor="middle" font-family="Liberation Sans">74</text><rect x="62.6" y="564.3" width="40.5" height="32.2" fill="#fff" stroke="#3a3a3a" stroke-width="0.9"/><line x1="73.6" y1="564.3" x2="73.6" y2="596.5" stroke="#3a3a3a" stroke-width="0.8"/><path d="M68.1 567.3 v5.5" stroke="#333" stroke-width="0.9"/><circle cx="68.1" cy="572.8" r="0.9" fill="#333"/><path d="M63.6 574.3 q1 -1 2 0 t2 0 t2 0 t2 0 t2 0" fill="none" stroke="#4a5ad0" stroke-width="0.7"/><path d="M66.6 577.3 l3 5 M69.6 577.3 l-3 5" stroke="#333" stroke-width="0.8"/><circle cx="66.6" cy="583.3" r="1.2" fill="none" stroke="#a06040" stroke-width="0.7"/><circle cx="69.6" cy="583.3" r="1.2" fill="none" stroke="#a06040" stroke-width="0.7"/><path d="M63.6 590.8 q2.5 -4 4.5 0 q2.5 4 4.5 0 q-2 -4 -4.5 0 q-2.5 4 -4.5 0 z" fill="none" stroke="#3040c0" stroke-width="0.9"/><path d="M63.6 590.8 h9" stroke="#3040c0" stroke-width="0.6"/><text x="81.1" y="605.8" font-size="6.8" fill="#333" text-anchor="middle" font-family="Liberation Sans">98</text><path d="M96.6 565.8 C86.6 570.3 75.6 578.3 75.1 588.3 C75.6 594.3 80.6 596.3 86.6 595.8 C94.6 592.3 98.6 584.3 96.6 565.8 Z" fill="#dc1f55"/><path d="M90.6 576.3 l-4 12" stroke="#fff" stroke-width="0.9"/><rect x="107.7" y="513.8" width="40.5" height="32.2" fill="#fff" stroke="#3a3a3a" stroke-width="0.9"/><line x1="118.7" y1="513.8" x2="118.7" y2="546.0" stroke="#3a3a3a" stroke-width="0.8"/><text x="109.7" y="533.8" font-size="4" fill="#a05030" font-family="Liberation Sans">80</text><path d="M108.7 540.3 q2.5 -4 4.5 0 q2.5 4 4.5 0 q-2 -4 -4.5 0 q-2.5 4 -4.5 0 z" fill="none" stroke="#3040c0" stroke-width="0.9"/><path d="M108.7 540.3 h9" stroke="#3040c0" stroke-width="0.6"/><path d="M121.7 529.8 h22 l-4 14 l-12 -4 z" fill="#dc1f55" opacity="0.9"/><text x="126.2" y="556.6" font-size="6.8" fill="#333" text-anchor="middle" font-family="Liberation Sans">75</text><rect x="107.7" y="564.3" width="40.5" height="32.2" fill="#fff" stroke="#3a3a3a" stroke-width="0.9"/><line x1="118.7" y1="564.3" x2="118.7" y2="596.5" stroke="#3a3a3a" stroke-width="0.8"/><path d="M113.2 567.3 v5.5" stroke="#333" stroke-width="0.9"/><circle cx="113.2" cy="572.8" r="0.9" fill="#333"/><path d="M108.7 574.3 q1 -1 2 0 t2 0 t2 0 t2 0 t2 0" fill="none" stroke="#4a5ad0" stroke-width="0.7"/><path d="M111.7 577.3 l3 5 M114.7 577.3 l-3 5" stroke="#333" stroke-width="0.8"/><circle cx="111.7" cy="583.3" r="1.2" fill="none" stroke="#a06040" stroke-width="0.7"/><circle cx="114.7" cy="583.3" r="1.2" fill="none" stroke="#a06040" stroke-width="0.7"/><path d="M108.7 590.8 q2.5 -4 4.5 0 q2.5 4 4.5 0 q-2 -4 -4.5 0 q-2.5 4 -4.5 0 z" fill="none" stroke="#3040c0" stroke-width="0.9"/><path d="M108.7 590.8 h9" stroke="#3040c0" stroke-width="0.6"/><text x="126.2" y="605.8" font-size="6.8" fill="#333" text-anchor="middle" font-family="Liberation Sans">99</text><circle cx="133.7" cy="580.3" r="14.5" fill="#dc1f55"/><circle cx="133.7" cy="580.3" r="14.5" fill="none" stroke="#f0a0c0" stroke-width="0.5" stroke-dasharray="1 2"/><rect x="152.8" y="513.8" width="40.5" height="32.2" fill="#fff" stroke="#3a3a3a" stroke-width="0.9"/><line x1="163.8" y1="513.8" x2="163.8" y2="546.0" stroke="#3a3a3a" stroke-width="0.8"/><text x="154.8" y="533.8" font-size="4" fill="#a05030" font-family="Liberation Sans">80</text><path d="M153.8 540.3 q2.5 -4 4.5 0 q2.5 4 4.5 0 q-2 -4 -4.5 0 q-2.5 4 -4.5 0 z" fill="none" stroke="#3040c0" stroke-width="0.9"/><path d="M153.8 540.3 h9" stroke="#3040c0" stroke-width="0.6"/><line x1="178.8" y1="529.8" x2="178.3" y2="533.8" stroke="#333" stroke-width="0.8"/><text x="171.3" y="556.6" font-size="6.8" fill="#333" text-anchor="middle" font-family="Liberation Sans">76</text><rect x="152.8" y="564.3" width="40.5" height="32.2" fill="#fff" stroke="#3a3a3a" stroke-width="0.9"/><line x1="163.8" y1="564.3" x2="163.8" y2="596.5" stroke="#3a3a3a" stroke-width="0.8"/><path d="M158.3 567.3 v5.5" stroke="#333" stroke-width="0.9"/><circle cx="158.3" cy="572.8" r="0.9" fill="#333"/><path d="M153.8 574.3 q1 -1 2 0 t2 0 t2 0 t2 0 t2 0" fill="none" stroke="#4a5ad0" stroke-width="0.7"/><path d="M156.8 577.3 l3 5 M159.8 577.3 l-3 5" stroke="#333" stroke-width="0.8"/><circle cx="156.8" cy="583.3" r="1.2" fill="none" stroke="#a06040" stroke-width="0.7"/><circle cx="159.8" cy="583.3" r="1.2" fill="none" stroke="#a06040" stroke-width="0.7"/><path d="M153.8 590.8 q2.5 -4 4.5 0 q2.5 4 4.5 0 q-2 -4 -4.5 0 q-2.5 4 -4.5 0 z" fill="none" stroke="#3040c0" stroke-width="0.9"/><path d="M153.8 590.8 h9" stroke="#3040c0" stroke-width="0.6"/><text x="171.3" y="605.8" font-size="6.8" fill="#333" text-anchor="middle" font-family="Liberation Sans">100</text><path d="M166.8 595.3 L171.8 576.3 L172.8 588.3 L178.8 566.3" fill="none" stroke="#a04060" stroke-width="0.6"/><rect x="197.9" y="513.8" width="40.5" height="32.2" fill="#fff" stroke="#3a3a3a" stroke-width="0.9"/><line x1="208.9" y1="513.8" x2="208.9" y2="546.0" stroke="#3a3a3a" stroke-width="0.8"/><text x="199.9" y="533.8" font-size="4" fill="#a05030" font-family="Liberation Sans">80</text><path d="M198.9 540.3 q2.5 -4 4.5 0 q2.5 4 4.5 0 q-2 -4 -4.5 0 q-2.5 4 -4.5 0 z" fill="none" stroke="#3040c0" stroke-width="0.9"/><path d="M198.9 540.3 h9" stroke="#3040c0" stroke-width="0.6"/><path d="M211.9 529.8 h22 l-4 14 l-12 -4 z" fill="#dc1f55" opacity="0.9"/><text x="216.4" y="556.6" font-size="6.8" fill="#333" text-anchor="middle" font-family="Liberation Sans">77</text><rect x="197.9" y="564.3" width="40.5" height="32.2" fill="#fff" stroke="#3a3a3a" stroke-width="0.9"/><line x1="208.9" y1="564.3" x2="208.9" y2="596.5" stroke="#3a3a3a" stroke-width="0.8"/><path d="M203.4 567.3 v5.5" stroke="#333" stroke-width="0.9"/><circle cx="203.4" cy="572.8" r="0.9" fill="#333"/><path d="M198.9 574.3 q1 -1 2 0 t2 0 t2 0 t2 0 t2 0" fill="none" stroke="#4a5ad0" stroke-width="0.7"/><path d="M201.9 577.3 l3 5 M204.9 577.3 l-3 5" stroke="#333" stroke-width="0.8"/><circle cx="201.9" cy="583.3" r="1.2" fill="none" stroke="#a06040" stroke-width="0.7"/><circle cx="204.9" cy="583.3" r="1.2" fill="none" stroke="#a06040" stroke-width="0.7"/><path d="M198.9 590.8 q2.5 -4 4.5 0 q2.5 4 4.5 0 q-2 -4 -4.5 0 q-2.5 4 -4.5 0 z" fill="none" stroke="#3040c0" stroke-width="0.9"/><path d="M198.9 590.8 h9" stroke="#3040c0" stroke-width="0.6"/><text x="216.4" y="605.8" font-size="6.8" fill="#333" text-anchor="middle" font-family="Liberation Sans">101</text><g transform="translate(223.80 580.40) rotate(-40) scale(0.2851) translate(-42.00 34.50)"><text x="0" y="0" font-size="100" fill="#dc1f55" stroke="#dc1f55" stroke-width="4.56" font-family="Liberation Sans">M</text></g><rect x="243.0" y="513.8" width="40.5" height="32.2" fill="#fff" stroke="#3a3a3a" stroke-width="0.9"/><line x1="254.0" y1="513.8" x2="254.0" y2="546.0" stroke="#3a3a3a" stroke-width="0.8"/><text x="245.0" y="533.8" font-size="4" fill="#a05030" font-family="Liberation Sans">80</text><path d="M244.0 540.3 q2.5 -4 4.5 0 q2.5 4 4.5 0 q-2 -4 -4.5 0 q-2.5 4 -4.5 0 z" fill="none" stroke="#3040c0" stroke-width="0.9"/><path d="M244.0 540.3 h9" stroke="#3040c0" stroke-width="0.6"/><line x1="269.0" y1="529.8" x2="268.5" y2="533.8" stroke="#333" stroke-width="0.8"/><text x="261.5" y="556.6" font-size="6.8" fill="#333" text-anchor="middle" font-family="Liberation Sans">78</text><rect x="243.0" y="564.3" width="40.5" height="32.2" fill="#fff" stroke="#3a3a3a" stroke-width="0.9"/><line x1="254.0" y1="564.3" x2="254.0" y2="596.5" stroke="#3a3a3a" stroke-width="0.8"/><path d="M248.5 567.3 v5.5" stroke="#333" stroke-width="0.9"/><circle cx="248.5" cy="572.8" r="0.9" fill="#333"/><path d="M244.0 574.3 q1 -1 2 0 t2 0 t2 0 t2 0 t2 0" fill="none" stroke="#4a5ad0" stroke-width="0.7"/><path d="M247.0 577.3 l3 5 M250.0 577.3 l-3 5" stroke="#333" stroke-width="0.8"/><circle cx="247.0" cy="583.3" r="1.2" fill="none" stroke="#a06040" stroke-width="0.7"/><circle cx="250.0" cy="583.3" r="1.2" fill="none" stroke="#a06040" stroke-width="0.7"/><path d="M244.0 590.8 q2.5 -4 4.5 0 q2.5 4 4.5 0 q-2 -4 -4.5 0 q-2.5 4 -4.5 0 z" fill="none" stroke="#3040c0" stroke-width="0.9"/><path d="M244.0 590.8 h9" stroke="#3040c0" stroke-width="0.6"/><text x="261.5" y="605.8" font-size="6.8" fill="#333" text-anchor="middle" font-family="Liberation Sans">102</text><g transform="translate(268.90 580.40) rotate(-28) scale(0.3434) translate(-25.00 16.00)"><text x="0" y="0" font-size="100" fill="#dc1f55" stroke="#dc1f55" stroke-width="3.79" font-family="Liberation Sans">y</text></g><rect x="288.1" y="513.8" width="40.5" height="32.2" fill="#fff" stroke="#3a3a3a" stroke-width="0.9"/><line x1="299.1" y1="513.8" x2="299.1" y2="546.0" stroke="#3a3a3a" stroke-width="0.8"/><text x="290.1" y="533.8" font-size="4" fill="#a05030" font-family="Liberation Sans">80</text><path d="M289.1 540.3 q2.5 -4 4.5 0 q2.5 4 4.5 0 q-2 -4 -4.5 0 q-2.5 4 -4.5 0 z" fill="none" stroke="#3040c0" stroke-width="0.9"/><path d="M289.1 540.3 h9" stroke="#3040c0" stroke-width="0.6"/><path d="M302.1 529.8 h22 l-4 14 l-12 -4 z" fill="#dc1f55" opacity="0.9"/><text x="306.6" y="556.6" font-size="6.8" fill="#333" text-anchor="middle" font-family="Liberation Sans">79</text><rect x="288.1" y="564.3" width="40.5" height="32.2" fill="#fff" stroke="#3a3a3a" stroke-width="0.9"/><line x1="299.1" y1="564.3" x2="299.1" y2="596.5" stroke="#3a3a3a" stroke-width="0.8"/><path d="M293.6 567.3 v5.5" stroke="#333" stroke-width="0.9"/><circle cx="293.6" cy="572.8" r="0.9" fill="#333"/><path d="M289.1 574.3 q1 -1 2 0 t2 0 t2 0 t2 0 t2 0" fill="none" stroke="#4a5ad0" stroke-width="0.7"/><path d="M292.1 577.3 l3 5 M295.1 577.3 l-3 5" stroke="#333" stroke-width="0.8"/><circle cx="292.1" cy="583.3" r="1.2" fill="none" stroke="#a06040" stroke-width="0.7"/><circle cx="295.1" cy="583.3" r="1.2" fill="none" stroke="#a06040" stroke-width="0.7"/><path d="M289.1 590.8 q2.5 -4 4.5 0 q2.5 4 4.5 0 q-2 -4 -4.5 0 q-2.5 4 -4.5 0 z" fill="none" stroke="#3040c0" stroke-width="0.9"/><path d="M289.1 590.8 h9" stroke="#3040c0" stroke-width="0.6"/><text x="306.6" y="605.8" font-size="6.8" fill="#333" text-anchor="middle" font-family="Liberation Sans">103</text><g transform="translate(314.00 580.40) rotate(-13) scale(0.3699) translate(-29.00 36.00)"><text x="0" y="0" font-size="100" fill="#dc1f55" stroke="#dc1f55" stroke-width="3.51" font-family="Liberation Sans">b</text></g><rect x="333.2" y="513.8" width="40.5" height="32.2" fill="#fff" stroke="#3a3a3a" stroke-width="0.9"/><line x1="344.2" y1="513.8" x2="344.2" y2="546.0" stroke="#3a3a3a" stroke-width="0.8"/><text x="335.2" y="533.8" font-size="4" fill="#a05030" font-family="Liberation Sans">80</text><path d="M334.2 540.3 q2.5 -4 4.5 0 q2.5 4 4.5 0 q-2 -4 -4.5 0 q-2.5 4 -4.5 0 z" fill="none" stroke="#3040c0" stroke-width="0.9"/><path d="M334.2 540.3 h9" stroke="#3040c0" stroke-width="0.6"/><path d="M363.2 530.8 q6 0 10 -1" stroke="#dc1f55" stroke-width="1.5" fill="none"/><text x="351.7" y="556.6" font-size="6.8" fill="#333" text-anchor="middle" font-family="Liberation Sans">80</text><rect x="333.2" y="564.3" width="40.5" height="32.2" fill="#fff" stroke="#3a3a3a" stroke-width="0.9"/><line x1="344.2" y1="564.3" x2="344.2" y2="596.5" stroke="#3a3a3a" stroke-width="0.8"/><path d="M338.7 567.3 v5.5" stroke="#333" stroke-width="0.9"/><circle cx="338.7" cy="572.8" r="0.9" fill="#333"/><path d="M334.2 574.3 q1 -1 2 0 t2 0 t2 0 t2 0 t2 0" fill="none" stroke="#4a5ad0" stroke-width="0.7"/><path d="M337.2 577.3 l3 5 M340.2 577.3 l-3 5" stroke="#333" stroke-width="0.8"/><circle cx="337.2" cy="583.3" r="1.2" fill="none" stroke="#a06040" stroke-width="0.7"/><circle cx="340.2" cy="583.3" r="1.2" fill="none" stroke="#a06040" stroke-width="0.7"/><path d="M334.2 590.8 q2.5 -4 4.5 0 q2.5 4 4.5 0 q-2 -4 -4.5 0 q-2.5 4 -4.5 0 z" fill="none" stroke="#3040c0" stroke-width="0.9"/><path d="M334.2 590.8 h9" stroke="#3040c0" stroke-width="0.6"/><text x="351.7" y="605.8" font-size="6.8" fill="#333" text-anchor="middle" font-family="Liberation Sans">104</text><g transform="translate(359.10 580.40) rotate(-5) scale(0.5172) translate(-28.00 26.50)"><text x="0" y="0" font-size="100" fill="#dc1f55" stroke="#dc1f55" stroke-width="2.51" font-family="Liberation Sans">e</text></g><rect x="378.3" y="513.8" width="40.5" height="32.2" fill="#fff" stroke="#3a3a3a" stroke-width="0.9"/><line x1="389.3" y1="513.8" x2="389.3" y2="546.0" stroke="#3a3a3a" stroke-width="0.8"/><text x="380.3" y="533.8" font-size="4" fill="#a05030" font-family="Liberation Sans">80</text><path d="M379.3 540.3 q2.5 -4 4.5 0 q2.5 4 4.5 0 q-2 -4 -4.5 0 q-2.5 4 -4.5 0 z" fill="none" stroke="#3040c0" stroke-width="0.9"/><path d="M379.3 540.3 h9" stroke="#3040c0" stroke-width="0.6"/><path d="M394.3 529.8 q5 10 10 4 l6 -4" stroke="#c06080" stroke-width="0.5" fill="none"/><text x="396.8" y="556.6" font-size="6.8" fill="#333" text-anchor="middle" font-family="Liberation Sans">81</text><rect x="378.3" y="564.3" width="40.5" height="32.2" fill="#fff" stroke="#3a3a3a" stroke-width="0.9"/><line x1="389.3" y1="564.3" x2="389.3" y2="596.5" stroke="#3a3a3a" stroke-width="0.8"/><path d="M383.8 567.3 v5.5" stroke="#333" stroke-width="0.9"/><circle cx="383.8" cy="572.8" r="0.9" fill="#333"/><path d="M379.3 574.3 q1 -1 2 0 t2 0 t2 0 t2 0 t2 0" fill="none" stroke="#4a5ad0" stroke-width="0.7"/><path d="M382.3 577.3 l3 5 M385.3 577.3 l-3 5" stroke="#333" stroke-width="0.8"/><circle cx="382.3" cy="583.3" r="1.2" fill="none" stroke="#a06040" stroke-width="0.7"/><circle cx="385.3" cy="583.3" r="1.2" fill="none" stroke="#a06040" stroke-width="0.7"/><path d="M379.3 590.8 q2.5 -4 4.5 0 q2.5 4 4.5 0 q-2 -4 -4.5 0 q-2.5 4 -4.5 0 z" fill="none" stroke="#3040c0" stroke-width="0.9"/><path d="M379.3 590.8 h9" stroke="#3040c0" stroke-width="0.6"/><text x="396.8" y="605.8" font-size="6.8" fill="#333" text-anchor="middle" font-family="Liberation Sans">105</text><g transform="translate(404.20 580.40) rotate(2) scale(0.5103) translate(-30.00 26.50)"><text x="0" y="0" font-size="100" fill="#dc1f55" stroke="#dc1f55" stroke-width="2.55" font-family="Liberation Sans">a</text></g><rect x="423.40000000000003" y="513.8" width="40.5" height="32.2" fill="#fff" stroke="#3a3a3a" stroke-width="0.9"/><line x1="434.40000000000003" y1="513.8" x2="434.40000000000003" y2="546.0" stroke="#3a3a3a" stroke-width="0.8"/><text x="425.40000000000003" y="533.8" font-size="4" fill="#a05030" font-family="Liberation Sans">80</text><path d="M424.40000000000003 540.3 q2.5 -4 4.5 0 q2.5 4 4.5 0 q-2 -4 -4.5 0 q-2.5 4 -4.5 0 z" fill="none" stroke="#3040c0" stroke-width="0.9"/><path d="M424.40000000000003 540.3 h9" stroke="#3040c0" stroke-width="0.6"/><path d="M437.40000000000003 529.8 h22 l-4 14 l-12 -4 z" fill="#dc1f55" opacity="0.9"/><text x="441.90000000000003" y="556.6" font-size="6.8" fill="#333" text-anchor="middle" font-family="Liberation Sans">82</text><rect x="423.40000000000003" y="564.3" width="40.5" height="32.2" fill="#fff" stroke="#3a3a3a" stroke-width="0.9"/><line x1="434.40000000000003" y1="564.3" x2="434.40000000000003" y2="596.5" stroke="#3a3a3a" stroke-width="0.8"/><path d="M428.90000000000003 567.3 v5.5" stroke="#333" stroke-width="0.9"/><circle cx="428.90000000000003" cy="572.8" r="0.9" fill="#333"/><path d="M424.40000000000003 574.3 q1 -1 2 0 t2 0 t2 0 t2 0 t2 0" fill="none" stroke="#4a5ad0" stroke-width="0.7"/><path d="M427.40000000000003 577.3 l3 5 M430.40000000000003 577.3 l-3 5" stroke="#333" stroke-width="0.8"/><circle cx="427.40000000000003" cy="583.3" r="1.2" fill="none" stroke="#a06040" stroke-width="0.7"/><circle cx="430.40000000000003" cy="583.3" r="1.2" fill="none" stroke="#a06040" stroke-width="0.7"/><path d="M424.40000000000003 590.8 q2.5 -4 4.5 0 q2.5 4 4.5 0 q-2 -4 -4.5 0 q-2.5 4 -4.5 0 z" fill="none" stroke="#3040c0" stroke-width="0.9"/><path d="M424.40000000000003 590.8 h9" stroke="#3040c0" stroke-width="0.6"/><text x="441.90000000000003" y="605.8" font-size="6.8" fill="#333" text-anchor="middle" font-family="Liberation Sans">106</text><g transform="translate(449.30 580.40) rotate(9) scale(0.5078) translate(-27.50 26.00)"><text x="0" y="0" font-size="100" fill="#dc1f55" stroke="#dc1f55" stroke-width="2.56" font-family="Liberation Sans">u</text></g><rect x="468.5" y="513.8" width="40.5" height="32.2" fill="#fff" stroke="#3a3a3a" stroke-width="0.9"/><line x1="479.5" y1="513.8" x2="479.5" y2="546.0" stroke="#3a3a3a" stroke-width="0.8"/><text x="470.5" y="533.8" font-size="4" fill="#a05030" font-family="Liberation Sans">80</text><path d="M469.5 540.3 q2.5 -4 4.5 0 q2.5 4 4.5 0 q-2 -4 -4.5 0 q-2.5 4 -4.5 0 z" fill="none" stroke="#3040c0" stroke-width="0.9"/><path d="M469.5 540.3 h9" stroke="#3040c0" stroke-width="0.6"/><line x1="494.5" y1="529.8" x2="494.0" y2="533.8" stroke="#333" stroke-width="0.8"/><text x="487.0" y="556.6" font-size="6.8" fill="#333" text-anchor="middle" font-family="Liberation Sans">83</text><rect x="468.5" y="564.3" width="40.5" height="32.2" fill="#fff" stroke="#3a3a3a" stroke-width="0.9"/><line x1="479.5" y1="564.3" x2="479.5" y2="596.5" stroke="#3a3a3a" stroke-width="0.8"/><path d="M474.0 567.3 v5.5" stroke="#333" stroke-width="0.9"/><circle cx="474.0" cy="572.8" r="0.9" fill="#333"/><path d="M469.5 574.3 q1 -1 2 0 t2 0 t2 0 t2 0 t2 0" fill="none" stroke="#4a5ad0" stroke-width="0.7"/><path d="M472.5 577.3 l3 5 M475.5 577.3 l-3 5" stroke="#333" stroke-width="0.8"/><circle cx="472.5" cy="583.3" r="1.2" fill="none" stroke="#a06040" stroke-width="0.7"/><circle cx="475.5" cy="583.3" r="1.2" fill="none" stroke="#a06040" stroke-width="0.7"/><path d="M469.5 590.8 q2.5 -4 4.5 0 q2.5 4 4.5 0 q-2 -4 -4.5 0 q-2.5 4 -4.5 0 z" fill="none" stroke="#3040c0" stroke-width="0.9"/><path d="M469.5 590.8 h9" stroke="#3040c0" stroke-width="0.6"/><text x="487.0" y="605.8" font-size="6.8" fill="#333" text-anchor="middle" font-family="Liberation Sans">107</text><g transform="translate(494.40 580.40) rotate(17) scale(0.4295) translate(-14.50 32.00)"><text x="0" y="0" font-size="100" fill="#dc1f55" stroke="#dc1f55" stroke-width="3.03" font-family="Liberation Sans">t</text></g><rect x="513.6" y="513.8" width="40.5" height="32.2" fill="#fff" stroke="#3a3a3a" stroke-width="0.9"/><line x1="524.6" y1="513.8" x2="524.6" y2="546.0" stroke="#3a3a3a" stroke-width="0.8"/><text x="515.6" y="533.8" font-size="4" fill="#a05030" font-family="Liberation Sans">80</text><path d="M514.6 540.3 q2.5 -4 4.5 0 q2.5 4 4.5 0 q-2 -4 -4.5 0 q-2.5 4 -4.5 0 z" fill="none" stroke="#3040c0" stroke-width="0.9"/><path d="M514.6 540.3 h9" stroke="#3040c0" stroke-width="0.6"/><path d="M527.6 529.8 h22 l-4 14 l-12 -4 z" fill="#dc1f55" opacity="0.9"/><text x="532.1" y="556.6" font-size="6.8" fill="#333" text-anchor="middle" font-family="Liberation Sans">84</text><rect x="513.6" y="564.3" width="40.5" height="32.2" fill="#fff" stroke="#3a3a3a" stroke-width="0.9"/><line x1="524.6" y1="564.3" x2="524.6" y2="596.5" stroke="#3a3a3a" stroke-width="0.8"/><path d="M519.1 567.3 v5.5" stroke="#333" stroke-width="0.9"/><circle cx="519.1" cy="572.8" r="0.9" fill="#333"/><path d="M514.6 574.3 q1 -1 2 0 t2 0 t2 0 t2 0 t2 0" fill="none" stroke="#4a5ad0" stroke-width="0.7"/><path d="M517.6 577.3 l3 5 M520.6 577.3 l-3 5" stroke="#333" stroke-width="0.8"/><circle cx="517.6" cy="583.3" r="1.2" fill="none" stroke="#a06040" stroke-width="0.7"/><circle cx="520.6" cy="583.3" r="1.2" fill="none" stroke="#a06040" stroke-width="0.7"/><path d="M514.6 590.8 q2.5 -4 4.5 0 q2.5 4 4.5 0 q-2 -4 -4.5 0 q-2.5 4 -4.5 0 z" fill="none" stroke="#3040c0" stroke-width="0.9"/><path d="M514.6 590.8 h9" stroke="#3040c0" stroke-width="0.6"/><text x="532.1" y="605.8" font-size="6.8" fill="#333" text-anchor="middle" font-family="Liberation Sans">108</text><g transform="translate(539.50 580.40) rotate(27) scale(0.4383) translate(-11.00 36.50)"><text x="0" y="0" font-size="100" fill="#dc1f55" stroke="#dc1f55" stroke-width="2.97" font-family="Liberation Sans">i</text></g><rect x="558.7" y="513.8" width="40.5" height="32.2" fill="#fff" stroke="#3a3a3a" stroke-width="0.9"/><line x1="569.7" y1="513.8" x2="569.7" y2="546.0" stroke="#3a3a3a" stroke-width="0.8"/><text x="560.7" y="533.8" font-size="4" fill="#a05030" font-family="Liberation Sans">80</text><path d="M559.7 540.3 q2.5 -4 4.5 0 q2.5 4 4.5 0 q-2 -4 -4.5 0 q-2.5 4 -4.5 0 z" fill="none" stroke="#3040c0" stroke-width="0.9"/><path d="M559.7 540.3 h9" stroke="#3040c0" stroke-width="0.6"/><line x1="584.7" y1="529.8" x2="584.2" y2="533.8" stroke="#333" stroke-width="0.8"/><text x="577.2" y="556.6" font-size="6.8" fill="#333" text-anchor="middle" font-family="Liberation Sans">85</text><rect x="558.7" y="564.3" width="40.5" height="32.2" fill="#fff" stroke="#3a3a3a" stroke-width="0.9"/><line x1="569.7" y1="564.3" x2="569.7" y2="596.5" stroke="#3a3a3a" stroke-width="0.8"/><path d="M564.2 567.3 v5.5" stroke="#333" stroke-width="0.9"/><circle cx="564.2" cy="572.8" r="0.9" fill="#333"/><path d="M559.7 574.3 q1 -1 2 0 t2 0 t2 0 t2 0 t2 0" fill="none" stroke="#4a5ad0" stroke-width="0.7"/><path d="M562.7 577.3 l3 5 M565.7 577.3 l-3 5" stroke="#333" stroke-width="0.8"/><circle cx="562.7" cy="583.3" r="1.2" fill="none" stroke="#a06040" stroke-width="0.7"/><circle cx="565.7" cy="583.3" r="1.2" fill="none" stroke="#a06040" stroke-width="0.7"/><path d="M559.7 590.8 q2.5 -4 4.5 0 q2.5 4 4.5 0 q-2 -4 -4.5 0 q-2.5 4 -4.5 0 z" fill="none" stroke="#3040c0" stroke-width="0.9"/><path d="M559.7 590.8 h9" stroke="#3040c0" stroke-width="0.6"/><text x="577.2" y="605.8" font-size="6.8" fill="#333" text-anchor="middle" font-family="Liberation Sans">109</text><g transform="translate(584.60 580.40) rotate(33) scale(0.4017) translate(-14.50 36.50)"><text x="0" y="0" font-size="100" fill="#dc1f55" stroke="#dc1f55" stroke-width="3.24" font-family="Liberation Sans">f</text></g><rect x="603.8000000000001" y="513.8" width="40.5" height="32.2" fill="#fff" stroke="#3a3a3a" stroke-width="0.9"/><line x1="614.8000000000001" y1="513.8" x2="614.8000000000001" y2="546.0" stroke="#3a3a3a" stroke-width="0.8"/><text x="605.8000000000001" y="533.8" font-size="4" fill="#a05030" font-family="Liberation Sans">80</text><path d="M604.8000000000001 540.3 q2.5 -4 4.5 0 q2.5 4 4.5 0 q-2 -4 -4.5 0 q-2.5 4 -4.5 0 z" fill="none" stroke="#3040c0" stroke-width="0.9"/><path d="M604.8000000000001 540.3 h9" stroke="#3040c0" stroke-width="0.6"/><path d="M617.8000000000001 529.8 h22 l-4 14 l-12 -4 z" fill="#dc1f55" opacity="0.9"/><text x="622.3000000000001" y="556.6" font-size="6.8" fill="#333" text-anchor="middle" font-family="Liberation Sans">86</text><rect x="603.8000000000001" y="564.3" width="40.5" height="32.2" fill="#fff" stroke="#3a3a3a" stroke-width="0.9"/><line x1="614.8000000000001" y1="564.3" x2="614.8000000000001" y2="596.5" stroke="#3a3a3a" stroke-width="0.8"/><path d="M609.3000000000001 567.3 v5.5" stroke="#333" stroke-width="0.9"/><circle cx="609.3000000000001" cy="572.8" r="0.9" fill="#333"/><path d="M604.8000000000001 574.3 q1 -1 2 0 t2 0 t2 0 t2 0 t2 0" fill="none" stroke="#4a5ad0" stroke-width="0.7"/><path d="M607.8000000000001 577.3 l3 5 M610.8000000000001 577.3 l-3 5" stroke="#333" stroke-width="0.8"/><circle cx="607.8000000000001" cy="583.3" r="1.2" fill="none" stroke="#a06040" stroke-width="0.7"/><circle cx="610.8000000000001" cy="583.3" r="1.2" fill="none" stroke="#a06040" stroke-width="0.7"/><path d="M604.8000000000001 590.8 q2.5 -4 4.5 0 q2.5 4 4.5 0 q-2 -4 -4.5 0 q-2.5 4 -4.5 0 z" fill="none" stroke="#3040c0" stroke-width="0.9"/><path d="M604.8000000000001 590.8 h9" stroke="#3040c0" stroke-width="0.6"/><text x="622.3000000000001" y="605.8" font-size="6.8" fill="#333" text-anchor="middle" font-family="Liberation Sans">110</text><g transform="translate(629.70 580.40) rotate(38) scale(0.4097) translate(-27.50 26.00)"><text x="0" y="0" font-size="100" fill="#dc1f55" stroke="#dc1f55" stroke-width="3.17" font-family="Liberation Sans">u</text></g><rect x="648.9" y="513.8" width="40.5" height="32.2" fill="#fff" stroke="#3a3a3a" stroke-width="0.9"/><line x1="659.9" y1="513.8" x2="659.9" y2="546.0" stroke="#3a3a3a" stroke-width="0.8"/><text x="650.9" y="533.8" font-size="4" fill="#a05030" font-family="Liberation Sans">80</text><path d="M649.9 540.3 q2.5 -4 4.5 0 q2.5 4 4.5 0 q-2 -4 -4.5 0 q-2.5 4 -4.5 0 z" fill="none" stroke="#3040c0" stroke-width="0.9"/><path d="M649.9 540.3 h9" stroke="#3040c0" stroke-width="0.6"/><path d="M678.9 530.8 q6 0 10 -1" stroke="#dc1f55" stroke-width="1.5" fill="none"/><text x="667.4" y="556.6" font-size="6.8" fill="#333" text-anchor="middle" font-family="Liberation Sans">87</text><rect x="648.9" y="564.3" width="40.5" height="32.2" fill="#fff" stroke="#3a3a3a" stroke-width="0.9"/><line x1="659.9" y1="564.3" x2="659.9" y2="596.5" stroke="#3a3a3a" stroke-width="0.8"/><path d="M654.4 567.3 v5.5" stroke="#333" stroke-width="0.9"/><circle cx="654.4" cy="572.8" r="0.9" fill="#333"/><path d="M649.9 574.3 q1 -1 2 0 t2 0 t2 0 t2 0 t2 0" fill="none" stroke="#4a5ad0" stroke-width="0.7"/><path d="M652.9 577.3 l3 5 M655.9 577.3 l-3 5" stroke="#333" stroke-width="0.8"/><circle cx="652.9" cy="583.3" r="1.2" fill="none" stroke="#a06040" stroke-width="0.7"/><circle cx="655.9" cy="583.3" r="1.2" fill="none" stroke="#a06040" stroke-width="0.7"/><path d="M649.9 590.8 q2.5 -4 4.5 0 q2.5 4 4.5 0 q-2 -4 -4.5 0 q-2.5 4 -4.5 0 z" fill="none" stroke="#3040c0" stroke-width="0.9"/><path d="M649.9 590.8 h9" stroke="#3040c0" stroke-width="0.6"/><text x="667.4" y="605.8" font-size="6.8" fill="#333" text-anchor="middle" font-family="Liberation Sans">111</text><path d="M663.9 591.3 L686.9 569.3" stroke="#dc1f55" stroke-width="4.5"/><rect x="694.0" y="513.8" width="40.5" height="32.2" fill="#fff" stroke="#3a3a3a" stroke-width="0.9"/><line x1="705.0" y1="513.8" x2="705.0" y2="546.0" stroke="#3a3a3a" stroke-width="0.8"/><text x="696.0" y="533.8" font-size="4" fill="#a05030" font-family="Liberation Sans">80</text><path d="M695.0 540.3 q2.5 -4 4.5 0 q2.5 4 4.5 0 q-2 -4 -4.5 0 q-2.5 4 -4.5 0 z" fill="none" stroke="#3040c0" stroke-width="0.9"/><path d="M695.0 540.3 h9" stroke="#3040c0" stroke-width="0.6"/><path d="M707.0 543.8 l10 -12 M708.0 541.8 h24" stroke="#c04060" stroke-width="0.5" fill="none"/><text x="712.5" y="556.6" font-size="6.8" fill="#333" text-anchor="middle" font-family="Liberation Sans">88</text><rect x="694.0" y="564.3" width="40.5" height="32.2" fill="#fff" stroke="#3a3a3a" stroke-width="0.9"/><line x1="705.0" y1="564.3" x2="705.0" y2="596.5" stroke="#3a3a3a" stroke-width="0.8"/><path d="M699.5 567.3 v5.5" stroke="#333" stroke-width="0.9"/><circle cx="699.5" cy="572.8" r="0.9" fill="#333"/><path d="M695.0 574.3 q1 -1 2 0 t2 0 t2 0 t2 0 t2 0" fill="none" stroke="#4a5ad0" stroke-width="0.7"/><path d="M698.0 577.3 l3 5 M701.0 577.3 l-3 5" stroke="#333" stroke-width="0.8"/><circle cx="698.0" cy="583.3" r="1.2" fill="none" stroke="#a06040" stroke-width="0.7"/><circle cx="701.0" cy="583.3" r="1.2" fill="none" stroke="#a06040" stroke-width="0.7"/><path d="M695.0 590.8 q2.5 -4 4.5 0 q2.5 4 4.5 0 q-2 -4 -4.5 0 q-2.5 4 -4.5 0 z" fill="none" stroke="#3040c0" stroke-width="0.9"/><path d="M695.0 590.8 h9" stroke="#3040c0" stroke-width="0.6"/><text x="712.5" y="605.8" font-size="6.8" fill="#333" text-anchor="middle" font-family="Liberation Sans">112</text><g transform="translate(719.90 580.40) rotate(23) scale(0.3672) translate(-33.00 34.50)"><text x="0" y="0" font-size="100" fill="#dc1f55" stroke="#dc1f55" stroke-width="3.54" font-family="Liberation Sans">F</text></g><rect x="739.1" y="513.8" width="40.5" height="32.2" fill="#fff" stroke="#3a3a3a" stroke-width="0.9"/><line x1="750.1" y1="513.8" x2="750.1" y2="546.0" stroke="#3a3a3a" stroke-width="0.8"/><text x="741.1" y="533.8" font-size="4" fill="#a05030" font-family="Liberation Sans">80</text><path d="M740.1 540.3 q2.5 -4 4.5 0 q2.5 4 4.5 0 q-2 -4 -4.5 0 q-2.5 4 -4.5 0 z" fill="none" stroke="#3040c0" stroke-width="0.9"/><path d="M740.1 540.3 h9" stroke="#3040c0" stroke-width="0.6"/><path d="M753.1 531.8 l3 3 M771.1 531.8 l6 6" stroke="#dc1f55" stroke-width="2"/><text x="757.6" y="556.6" font-size="6.8" fill="#333" text-anchor="middle" font-family="Liberation Sans">89</text><rect x="739.1" y="564.3" width="40.5" height="32.2" fill="#fff" stroke="#3a3a3a" stroke-width="0.9"/><line x1="750.1" y1="564.3" x2="750.1" y2="596.5" stroke="#3a3a3a" stroke-width="0.8"/><path d="M744.6 567.3 v5.5" stroke="#333" stroke-width="0.9"/><circle cx="744.6" cy="572.8" r="0.9" fill="#333"/><path d="M740.1 574.3 q1 -1 2 0 t2 0 t2 0 t2 0 t2 0" fill="none" stroke="#4a5ad0" stroke-width="0.7"/><path d="M743.1 577.3 l3 5 M746.1 577.3 l-3 5" stroke="#333" stroke-width="0.8"/><circle cx="743.1" cy="583.3" r="1.2" fill="none" stroke="#a06040" stroke-width="0.7"/><circle cx="746.1" cy="583.3" r="1.2" fill="none" stroke="#a06040" stroke-width="0.7"/><path d="M740.1 590.8 q2.5 -4 4.5 0 q2.5 4 4.5 0 q-2 -4 -4.5 0 q-2.5 4 -4.5 0 z" fill="none" stroke="#3040c0" stroke-width="0.9"/><path d="M740.1 590.8 h9" stroke="#3040c0" stroke-width="0.6"/><text x="757.6" y="605.8" font-size="6.8" fill="#333" text-anchor="middle" font-family="Liberation Sans">113</text><g transform="translate(765.00 580.40) rotate(21) scale(0.4252) translate(-11.00 36.50)"><text x="0" y="0" font-size="100" fill="#dc1f55" stroke="#dc1f55" stroke-width="3.06" font-family="Liberation Sans">l</text></g><rect x="784.2" y="513.8" width="40.5" height="32.2" fill="#fff" stroke="#3a3a3a" stroke-width="0.9"/><line x1="795.2" y1="513.8" x2="795.2" y2="546.0" stroke="#3a3a3a" stroke-width="0.8"/><text x="786.2" y="533.8" font-size="4" fill="#a05030" font-family="Liberation Sans">80</text><path d="M785.2 540.3 q2.5 -4 4.5 0 q2.5 4 4.5 0 q-2 -4 -4.5 0 q-2.5 4 -4.5 0 z" fill="none" stroke="#3040c0" stroke-width="0.9"/><path d="M785.2 540.3 h9" stroke="#3040c0" stroke-width="0.6"/><path d="M797.2 543.8 l20 -12 M798.2 541.8 h24" stroke="#c04060" stroke-width="0.5" fill="none"/><text x="802.7" y="556.6" font-size="6.8" fill="#333" text-anchor="middle" font-family="Liberation Sans">90</text><rect x="784.2" y="564.3" width="40.5" height="32.2" fill="#fff" stroke="#3a3a3a" stroke-width="0.9"/><line x1="795.2" y1="564.3" x2="795.2" y2="596.5" stroke="#3a3a3a" stroke-width="0.8"/><path d="M789.7 567.3 v5.5" stroke="#333" stroke-width="0.9"/><circle cx="789.7" cy="572.8" r="0.9" fill="#333"/><path d="M785.2 574.3 q1 -1 2 0 t2 0 t2 0 t2 0 t2 0" fill="none" stroke="#4a5ad0" stroke-width="0.7"/><path d="M788.2 577.3 l3 5 M791.2 577.3 l-3 5" stroke="#333" stroke-width="0.8"/><circle cx="788.2" cy="583.3" r="1.2" fill="none" stroke="#a06040" stroke-width="0.7"/><circle cx="791.2" cy="583.3" r="1.2" fill="none" stroke="#a06040" stroke-width="0.7"/><path d="M785.2 590.8 q2.5 -4 4.5 0 q2.5 4 4.5 0 q-2 -4 -4.5 0 q-2.5 4 -4.5 0 z" fill="none" stroke="#3040c0" stroke-width="0.9"/><path d="M785.2 590.8 h9" stroke="#3040c0" stroke-width="0.6"/><text x="802.7" y="605.8" font-size="6.8" fill="#333" text-anchor="middle" font-family="Liberation Sans">114</text><g transform="translate(810.10 580.40) rotate(10) scale(0.4840) translate(-28.00 26.50)"><text x="0" y="0" font-size="100" fill="#dc1f55" stroke="#dc1f55" stroke-width="2.69" font-family="Liberation Sans">o</text></g><rect x="829.3000000000001" y="513.8" width="40.5" height="32.2" fill="#fff" stroke="#3a3a3a" stroke-width="0.9"/><line x1="840.3000000000001" y1="513.8" x2="840.3000000000001" y2="546.0" stroke="#3a3a3a" stroke-width="0.8"/><text x="831.3000000000001" y="533.8" font-size="4" fill="#a05030" font-family="Liberation Sans">80</text><path d="M830.3000000000001 540.3 q2.5 -4 4.5 0 q2.5 4 4.5 0 q-2 -4 -4.5 0 q-2.5 4 -4.5 0 z" fill="none" stroke="#3040c0" stroke-width="0.9"/><path d="M830.3000000000001 540.3 h9" stroke="#3040c0" stroke-width="0.6"/><path d="M842.3000000000001 543.8 l10 -12 M843.3000000000001 541.8 h24" stroke="#c04060" stroke-width="0.5" fill="none"/><text x="847.8000000000001" y="556.6" font-size="6.8" fill="#333" text-anchor="middle" font-family="Liberation Sans">91</text><rect x="829.3000000000001" y="564.3" width="40.5" height="32.2" fill="#fff" stroke="#3a3a3a" stroke-width="0.9"/><line x1="840.3000000000001" y1="564.3" x2="840.3000000000001" y2="596.5" stroke="#3a3a3a" stroke-width="0.8"/><path d="M834.8000000000001 567.3 v5.5" stroke="#333" stroke-width="0.9"/><circle cx="834.8000000000001" cy="572.8" r="0.9" fill="#333"/><path d="M830.3000000000001 574.3 q1 -1 2 0 t2 0 t2 0 t2 0 t2 0" fill="none" stroke="#4a5ad0" stroke-width="0.7"/><path d="M833.3000000000001 577.3 l3 5 M836.3000000000001 577.3 l-3 5" stroke="#333" stroke-width="0.8"/><circle cx="833.3000000000001" cy="583.3" r="1.2" fill="none" stroke="#a06040" stroke-width="0.7"/><circle cx="836.3000000000001" cy="583.3" r="1.2" fill="none" stroke="#a06040" stroke-width="0.7"/><path d="M830.3000000000001 590.8 q2.5 -4 4.5 0 q2.5 4 4.5 0 q-2 -4 -4.5 0 q-2.5 4 -4.5 0 z" fill="none" stroke="#3040c0" stroke-width="0.9"/><path d="M830.3000000000001 590.8 h9" stroke="#3040c0" stroke-width="0.6"/><text x="847.8000000000001" y="605.8" font-size="6.8" fill="#333" text-anchor="middle" font-family="Liberation Sans">115</text><g transform="translate(855.20 580.40) rotate(2) scale(0.3628) translate(-36.00 26.50)"><text x="0" y="0" font-size="100" fill="#dc1f55" stroke="#dc1f55" stroke-width="3.58" font-family="Liberation Sans">w</text></g><rect x="874.4" y="513.8" width="40.5" height="32.2" fill="#fff" stroke="#3a3a3a" stroke-width="0.9"/><line x1="885.4" y1="513.8" x2="885.4" y2="546.0" stroke="#3a3a3a" stroke-width="0.8"/><text x="876.4" y="533.8" font-size="4" fill="#a05030" font-family="Liberation Sans">80</text><path d="M875.4 540.3 q2.5 -4 4.5 0 q2.5 4 4.5 0 q-2 -4 -4.5 0 q-2.5 4 -4.5 0 z" fill="none" stroke="#3040c0" stroke-width="0.9"/><path d="M875.4 540.3 h9" stroke="#3040c0" stroke-width="0.6"/><path d="M888.4 529.8 h22 l-4 14 l-12 -4 z" fill="#dc1f55" opacity="0.9"/><text x="892.9" y="556.6" font-size="6.8" fill="#333" text-anchor="middle" font-family="Liberation Sans">92</text><rect x="874.4" y="564.3" width="40.5" height="32.2" fill="#fff" stroke="#3a3a3a" stroke-width="0.9"/><line x1="885.4" y1="564.3" x2="885.4" y2="596.5" stroke="#3a3a3a" stroke-width="0.8"/><path d="M879.9 567.3 v5.5" stroke="#333" stroke-width="0.9"/><circle cx="879.9" cy="572.8" r="0.9" fill="#333"/><path d="M875.4 574.3 q1 -1 2 0 t2 0 t2 0 t2 0 t2 0" fill="none" stroke="#4a5ad0" stroke-width="0.7"/><path d="M878.4 577.3 l3 5 M881.4 577.3 l-3 5" stroke="#333" stroke-width="0.8"/><circle cx="878.4" cy="583.3" r="1.2" fill="none" stroke="#a06040" stroke-width="0.7"/><circle cx="881.4" cy="583.3" r="1.2" fill="none" stroke="#a06040" stroke-width="0.7"/><path d="M875.4 590.8 q2.5 -4 4.5 0 q2.5 4 4.5 0 q-2 -4 -4.5 0 q-2.5 4 -4.5 0 z" fill="none" stroke="#3040c0" stroke-width="0.9"/><path d="M875.4 590.8 h9" stroke="#3040c0" stroke-width="0.6"/><text x="892.9" y="605.8" font-size="6.8" fill="#333" text-anchor="middle" font-family="Liberation Sans">116</text><g transform="translate(900.30 580.40) rotate(-8) scale(0.4983) translate(-28.00 26.50)"><text x="0" y="0" font-size="100" fill="#dc1f55" stroke="#dc1f55" stroke-width="2.61" font-family="Liberation Sans">e</text></g><rect x="919.5" y="513.8" width="40.5" height="32.2" fill="#fff" stroke="#3a3a3a" stroke-width="0.9"/><line x1="930.5" y1="513.8" x2="930.5" y2="546.0" stroke="#3a3a3a" stroke-width="0.8"/><text x="921.5" y="533.8" font-size="4" fill="#a05030" font-family="Liberation Sans">80</text><path d="M920.5 540.3 q2.5 -4 4.5 0 q2.5 4 4.5 0 q-2 -4 -4.5 0 q-2.5 4 -4.5 0 z" fill="none" stroke="#3040c0" stroke-width="0.9"/><path d="M920.5 540.3 h9" stroke="#3040c0" stroke-width="0.6"/><path d="M932.5 529.8 h26 a13 12 0 0 1 -26 0z" fill="#dc1f55"/><text x="938.0" y="556.6" font-size="6.8" fill="#333" text-anchor="middle" font-family="Liberation Sans">93</text><rect x="919.5" y="564.3" width="40.5" height="32.2" fill="#fff" stroke="#3a3a3a" stroke-width="0.9"/><line x1="930.5" y1="564.3" x2="930.5" y2="596.5" stroke="#3a3a3a" stroke-width="0.8"/><path d="M925.0 567.3 v5.5" stroke="#333" stroke-width="0.9"/><circle cx="925.0" cy="572.8" r="0.9" fill="#333"/><path d="M920.5 574.3 q1 -1 2 0 t2 0 t2 0 t2 0 t2 0" fill="none" stroke="#4a5ad0" stroke-width="0.7"/><path d="M923.5 577.3 l3 5 M926.5 577.3 l-3 5" stroke="#333" stroke-width="0.8"/><circle cx="923.5" cy="583.3" r="1.2" fill="none" stroke="#a06040" stroke-width="0.7"/><circle cx="926.5" cy="583.3" r="1.2" fill="none" stroke="#a06040" stroke-width="0.7"/><path d="M920.5 590.8 q2.5 -4 4.5 0 q2.5 4 4.5 0 q-2 -4 -4.5 0 q-2.5 4 -4.5 0 z" fill="none" stroke="#3040c0" stroke-width="0.9"/><path d="M920.5 590.8 h9" stroke="#3040c0" stroke-width="0.6"/><text x="938.0" y="605.8" font-size="6.8" fill="#333" text-anchor="middle" font-family="Liberation Sans">117</text><g transform="translate(945.40 580.40) rotate(-15) scale(0.5179) translate(-19.00 27.00)"><text x="0" y="0" font-size="100" fill="#dc1f55" stroke="#dc1f55" stroke-width="2.51" font-family="Liberation Sans">r</text></g><rect x="964.6" y="513.8" width="40.5" height="32.2" fill="#fff" stroke="#3a3a3a" stroke-width="0.9"/><line x1="975.6" y1="513.8" x2="975.6" y2="546.0" stroke="#3a3a3a" stroke-width="0.8"/><text x="966.6" y="533.8" font-size="4" fill="#a05030" font-family="Liberation Sans">80</text><path d="M965.6 540.3 q2.5 -4 4.5 0 q2.5 4 4.5 0 q-2 -4 -4.5 0 q-2.5 4 -4.5 0 z" fill="none" stroke="#3040c0" stroke-width="0.9"/><path d="M965.6 540.3 h9" stroke="#3040c0" stroke-width="0.6"/><path d="M977.6 543.8 l10 -12 M978.6 541.8 h24" stroke="#c04060" stroke-width="0.5" fill="none"/><text x="983.1" y="556.6" font-size="6.8" fill="#333" text-anchor="middle" font-family="Liberation Sans">94</text><rect x="964.6" y="564.3" width="40.5" height="32.2" fill="#fff" stroke="#3a3a3a" stroke-width="0.9"/><line x1="975.6" y1="564.3" x2="975.6" y2="596.5" stroke="#3a3a3a" stroke-width="0.8"/><path d="M970.1 567.3 v5.5" stroke="#333" stroke-width="0.9"/><circle cx="970.1" cy="572.8" r="0.9" fill="#333"/><path d="M965.6 574.3 q1 -1 2 0 t2 0 t2 0 t2 0 t2 0" fill="none" stroke="#4a5ad0" stroke-width="0.7"/><path d="M968.6 577.3 l3 5 M971.6 577.3 l-3 5" stroke="#333" stroke-width="0.8"/><circle cx="968.6" cy="583.3" r="1.2" fill="none" stroke="#a06040" stroke-width="0.7"/><circle cx="971.6" cy="583.3" r="1.2" fill="none" stroke="#a06040" stroke-width="0.7"/><path d="M965.6 590.8 q2.5 -4 4.5 0 q2.5 4 4.5 0 q-2 -4 -4.5 0 q-2.5 4 -4.5 0 z" fill="none" stroke="#3040c0" stroke-width="0.9"/><path d="M965.6 590.8 h9" stroke="#3040c0" stroke-width="0.6"/><text x="983.1" y="605.8" font-size="6.8" fill="#333" text-anchor="middle" font-family="Liberation Sans">118</text><g transform="translate(990.50 580.40) rotate(-20) scale(0.4501) translate(-24.50 26.50)"><text x="0" y="0" font-size="100" fill="#dc1f55" stroke="#dc1f55" stroke-width="2.89" font-family="Liberation Sans">s</text></g><rect x="1009.7" y="513.8" width="40.5" height="32.2" fill="#fff" stroke="#3a3a3a" stroke-width="0.9"/><line x1="1020.7" y1="513.8" x2="1020.7" y2="546.0" stroke="#3a3a3a" stroke-width="0.8"/><text x="1011.7" y="533.8" font-size="4" fill="#a05030" font-family="Liberation Sans">80</text><path d="M1010.7 540.3 q2.5 -4 4.5 0 q2.5 4 4.5 0 q-2 -4 -4.5 0 q-2.5 4 -4.5 0 z" fill="none" stroke="#3040c0" stroke-width="0.9"/><path d="M1010.7 540.3 h9" stroke="#3040c0" stroke-width="0.6"/><path d="M1022.7 543.8 l15 -12 M1023.7 541.8 h24" stroke="#c04060" stroke-width="0.5" fill="none"/><text x="1028.2" y="556.6" font-size="6.8" fill="#333" text-anchor="middle" font-family="Liberation Sans">95</text><rect x="1009.7" y="564.3" width="40.5" height="32.2" fill="#fff" stroke="#3a3a3a" stroke-width="0.9"/><line x1="1020.7" y1="564.3" x2="1020.7" y2="596.5" stroke="#3a3a3a" stroke-width="0.8"/><path d="M1015.2 567.3 v5.5" stroke="#333" stroke-width="0.9"/><circle cx="1015.2" cy="572.8" r="0.9" fill="#333"/><path d="M1010.7 574.3 q1 -1 2 0 t2 0 t2 0 t2 0 t2 0" fill="none" stroke="#4a5ad0" stroke-width="0.7"/><path d="M1013.7 577.3 l3 5 M1016.7 577.3 l-3 5" stroke="#333" stroke-width="0.8"/><circle cx="1013.7" cy="583.3" r="1.2" fill="none" stroke="#a06040" stroke-width="0.7"/><circle cx="1016.7" cy="583.3" r="1.2" fill="none" stroke="#a06040" stroke-width="0.7"/><path d="M1010.7 590.8 q2.5 -4 4.5 0 q2.5 4 4.5 0 q-2 -4 -4.5 0 q-2.5 4 -4.5 0 z" fill="none" stroke="#3040c0" stroke-width="0.9"/><path d="M1010.7 590.8 h9" stroke="#3040c0" stroke-width="0.6"/><text x="1028.2" y="605.8" font-size="6.8" fill="#333" text-anchor="middle" font-family="Liberation Sans">119</text><path d="M1021.7 566.3 L1048.7 573.3" fill="none" stroke="#a04060" stroke-width="0.5"/><rect x="1054.8" y="513.8" width="40.5" height="32.2" fill="#fff" stroke="#3a3a3a" stroke-width="0.9"/><line x1="1065.8" y1="513.8" x2="1065.8" y2="546.0" stroke="#3a3a3a" stroke-width="0.8"/><text x="1056.8" y="533.8" font-size="4" fill="#a05030" font-family="Liberation Sans">80</text><path d="M1055.8 540.3 q2.5 -4 4.5 0 q2.5 4 4.5 0 q-2 -4 -4.5 0 q-2.5 4 -4.5 0 z" fill="none" stroke="#3040c0" stroke-width="0.9"/><path d="M1055.8 540.3 h9" stroke="#3040c0" stroke-width="0.6"/><path d="M1084.8 530.8 q6 0 10 -1" stroke="#dc1f55" stroke-width="1.5" fill="none"/><text x="1073.3" y="556.6" font-size="6.8" fill="#333" text-anchor="middle" font-family="Liberation Sans">96</text></svg></div>
<div class="r" style="left:0px;top:611px;width:1110px;height:13px;background:#f0f0f0"></div>
<div class="r" style="left:0px;top:611px;width:1110px;height:1px;background:#d8d8d8"></div>
<div class="t" style="left:1.30px;top:615.86px;font-size:7.0px;line-height:7.0px;color:#222;font-weight:normal;transform:scaleX(0.9092);">For Help, press F1</div>
<div class="r" style="left:919.5px;top:613.5px;width:103.0px;height:9.5px;background:#ececec;box-shadow:inset 1px 1px 0 #c4c4c4"></div>
<div class="r" style="left:1024px;top:613.5px;width:30px;height:9.5px;background:#ececec;box-shadow:inset 1px 1px 0 #c4c4c4"></div>
<div class="r" style="left:1055.5px;top:613.5px;width:32.5px;height:9.5px;background:#ececec;box-shadow:inset 1px 1px 0 #c4c4c4"></div>
<div class="r" style="left:1089.5px;top:613.5px;width:20.5px;height:9.5px;background:#ececec;box-shadow:inset 1px 1px 0 #c4c4c4"></div>
<div class="r" style="left:0px;top:623px;width:1110px;height:1px;background:#6a6a6a"></div>
<div class="t" style="left:922.60px;top:615.86px;font-size:7.0px;line-height:7.0px;color:#222;font-weight:normal;transform:scaleX(0.9306);">X,Y: -2295, 1441 ( 0, -3253 )</div>
<div class="t" style="left:1026.00px;top:615.86px;font-size:7.0px;line-height:7.0px;color:#222;font-weight:normal;transform:scaleX(0.8565);">50%</div>
<div class="t" style="left:1057.00px;top:615.86px;font-size:7.0px;line-height:7.0px;color:#222;font-weight:normal;transform:scaleX(0.8769);">D: 5225</div>
<div class="t" style="left:1091.50px;top:615.86px;font-size:7.0px;line-height:7.0px;color:#222;font-weight:normal;transform:scaleX(1.0350);">NUM</div>
<div class="r" style="left:971.5px;top:89.5px;width:124.0px;height:227.5px;background:#f0f0f0;box-shadow:0 0 0 1px #9a9a9a, 1px 1px 3px rgba(0,0,0,0.15)"></div>
<div class="r" style="left:971.5px;top:89.5px;width:124.0px;height:15.0px;background:#ffffff"></div>
<div class="t" style="left:974.00px;top:93.24px;font-size:7.8px;line-height:7.8px;color:#1a1a1a;font-weight:normal;transform:scaleX(0.8592);">Select color</div>
<svg class="r" style="left:1082px;top:92px" width="10" height="10"><path d="M1.5 1.5 L8.5 8.5 M8.5 1.5 L1.5 8.5" stroke="#333" stroke-width="1"/></svg>
<div class="r" style="left:978.5px;top:109.5px;width:112px;height:24px;box-shadow:inset 0 0 0 1px #d0d0d0"></div>
<div class="r" style="left:981.5px;top:106px;width:46.0px;height:6px;background:#f0f0f0"></div>
<div class="t" style="left:983.00px;top:106.26px;font-size:7.2px;line-height:7.2px;color:#222;font-weight:normal;transform:scaleX(0.8792);">Current Palette</div>
<div class="r" style="left:984px;top:117px;width:31.5px;height:11.5px;background:#f3f3f3;border-right:1px solid #7a7a7a;border-bottom:1px solid #7a7a7a;border-left:1px solid #fff;border-top:1px solid #fff;box-sizing:border-box"></div>
<div class="t" style="left:986.47px;top:118.86px;font-size:7.0px;line-height:7.0px;color:#222;font-weight:normal;transform:scaleX(1.0000);">Colors...</div>
<div class="r" style="left:1020.5px;top:117.4px;width:66.09999999999991px;height:10.399999999999991px;background:#fff;box-shadow:inset 0 0 0 1px #7a7a7a"></div>
<div class="r" style="left:1076.1px;top:118.4px;width:9.5px;height:8.399999999999991px;background:#f0f0f0;border-right:1px solid #909090;border-bottom:1px solid #909090;box-sizing:border-box"></div>
<svg class="r" style="left:1078.1px;top:121.1px" width="6" height="4"><path d="M0.5 0.5 h4.5 l-2.25 2.5 z" fill="#000"/></svg>
<div class="r" style="left:1022px;top:118.8px;width:54px;height:7.6000000000000085px;background:#1a7ad4"></div>
<div class="t" style="left:1022.50px;top:118.96px;font-size:7.0px;line-height:7.0px;color:#ffffff;font-weight:normal;transform:scaleX(0.8277);">CUSTOM</div>
<div class="t" style="left:978.00px;top:139.56px;font-size:7.2px;line-height:7.2px;color:#222;font-weight:normal;transform:scaleX(0.8405);">Needle :</div>
<div class="r" style="left:1003.2px;top:137.2px;width:83.09999999999991px;height:11.600000000000023px;background:#fff;box-shadow:inset 0 0 0 1px #7a7a7a"></div>
<div class="r" style="left:1075.8px;top:138.2px;width:9.5px;height:9.600000000000023px;background:#f0f0f0;border-right:1px solid #909090;border-bottom:1px solid #909090;box-sizing:border-box"></div>
<svg class="r" style="left:1077.8px;top:141.5px" width="6" height="4"><path d="M0.5 0.5 h4.5 l-2.25 2.5 z" fill="#000"/></svg>
<div class="t" style="left:1007.00px;top:139.46px;font-size:7.2px;line-height:7.2px;color:#222;font-weight:normal;transform:scaleX(1.0007);">003</div>
<div class="r" style="left:1034.3px;top:139.5px;width:41.40000000000009px;height:8.0px;background:#d8215b;box-shadow:inset 0 0 0 0.7px #601030"></div>
<div class="r" style="left:978px;top:152.2px;width:112px;height:1.0px;background:#d8d8d8"></div>
<div class="t" style="left:978.30px;top:158.96px;font-size:7.2px;line-height:7.2px;color:#222;font-weight:normal;transform:scaleX(0.7930);">R:</div>
<div class="r" style="left:985.9px;top:157.9px;width:25.399999999999977px;height:9.8px;background:#fff;box-shadow:inset 0 0 0 1px #8a8a8a"></div>
<div class="r" style="left:1003.3px;top:158.9px;width:7px;height:7.8px;background:#f0f0f0"></div>
<svg class="r" style="left:1003.3px;top:158.5px" width="8" height="9"><path d="M2 3 h3 l-1.5 -1.6z M2 6 h3 l-1.5 1.6z" fill="#333"/><line x1="0.5" y1="4.5" x2="7" y2="4.5" stroke="#999" stroke-width="0.6"/></svg>
<div class="t" style="left:989.81px;top:159.06px;font-size:7.2px;line-height:7.2px;color:#222;font-weight:normal;transform:scaleX(1.0000);">216</div>
<div class="t" style="left:1016.00px;top:158.96px;font-size:7.2px;line-height:7.2px;color:#222;font-weight:normal;transform:scaleX(0.7908);">G:</div>
<div class="r" style="left:1023.5px;top:157.9px;width:25.299999999999955px;height:9.8px;background:#fff;box-shadow:inset 0 0 0 1px #8a8a8a"></div>
<div class="r" style="left:1040.8px;top:158.9px;width:7px;height:7.8px;background:#f0f0f0"></div>
<svg class="r" style="left:1040.8px;top:158.5px" width="8" height="9"><path d="M2 3 h3 l-1.5 -1.6z M2 6 h3 l-1.5 1.6z" fill="#333"/><line x1="0.5" y1="4.5" x2="7" y2="4.5" stroke="#999" stroke-width="0.6"/></svg>
<div class="t" style="left:1031.31px;top:159.06px;font-size:7.2px;line-height:7.2px;color:#222;font-weight:normal;transform:scaleX(1.0000);">33</div>
<div class="t" style="left:1053.00px;top:158.96px;font-size:7.2px;line-height:7.2px;color:#222;font-weight:normal;transform:scaleX(0.8099);">B:</div>
<div class="r" style="left:1060.8px;top:157.9px;width:25.0px;height:9.8px;background:#fff;box-shadow:inset 0 0 0 1px #8a8a8a"></div>
<div class="r" style="left:1077.8px;top:158.9px;width:7px;height:7.8px;background:#f0f0f0"></div>
<svg class="r" style="left:1077.8px;top:158.5px" width="8" height="9"><path d="M2 3 h3 l-1.5 -1.6z M2 6 h3 l-1.5 1.6z" fill="#333"/><line x1="0.5" y1="4.5" x2="7" y2="4.5" stroke="#999" stroke-width="0.6"/></svg>
<div class="t" style="left:1068.31px;top:159.06px;font-size:7.2px;line-height:7.2px;color:#222;font-weight:normal;transform:scaleX(1.0000);">91</div>
<div class="r" style="left:978px;top:174.7px;width:24px;height:10.900000000000006px;background:#f3f3f3;border-right:1px solid #7a7a7a;border-bottom:1px solid #7a7a7a;border-left:1px solid #fff;border-top:1px solid #fff;box-sizing:border-box"></div>
<div class="t" style="left:982.61px;top:176.46px;font-size:7.2px;line-height:7.2px;color:#222;font-weight:normal;transform:scaleX(1.0000);">Next</div>
<div class="r" style="left:1013.3px;top:174.5px;width:78.2px;height:11px;background:#f0f0f0;box-shadow:inset 0 0 0 1px #707070"></div>
<div class="t" style="left:1022.63px;top:176.36px;font-size:7.2px;line-height:7.2px;color:#222;font-weight:normal;transform:scaleX(1.0000);">RGB: 240/240/240</div>
<div class="r" style="left:978px;top:188.8px;width:91.4px;height:83.8px;background:linear-gradient(to bottom, rgba(128,128,128,0) 0%, rgba(128,128,128,1) 100%), linear-gradient(to right, #f00 0%, #ff0 17%, #0f0 33%, #0ff 50%, #00f 67%, #f0f 83%, #f00 100%);box-shadow:0 0 0 0.5px #606060"></div>
<svg class="r" style="left:1058px;top:204px" width="12" height="12"><path d="M6 0.5 v4 M6 7.5 v4 M0.5 6 h4 M7.5 6 h4" stroke="#d8a0b8" stroke-width="0.9"/></svg>
<div class="r" style="left:1077px;top:188.8px;width:14.8px;height:83.8px;background:linear-gradient(to bottom, #ffffff 0%, #d8215b 50%, #000000 100%);box-shadow:inset 0 0 0 1px #404040"></div>
<svg class="r" style="left:1082px;top:227px" width="7" height="8"><path d="M1 4 L6 1 L6 7 Z" fill="#3aa890"/></svg>
<div class="t" style="left:978.00px;top:276.26px;font-size:7.2px;line-height:7.2px;color:#333;font-weight:normal;transform:scaleX(0.8599);">Original Color:</div>
<div class="t" style="left:1035.00px;top:276.26px;font-size:7.2px;line-height:7.2px;color:#333;font-weight:normal;transform:scaleX(0.8649);">Selected Color:</div>
<div class="r" style="left:978.2px;top:284.3px;width:54.399999999999864px;height:10.899999999999977px;background:#d8215b;box-shadow:inset 0 0 0 0.6px #701030"></div>
<div class="r" style="left:1035.3px;top:284.3px;width:56.5px;height:10.899999999999977px;background:#d8215b;box-shadow:inset 0 0 0 0.6px #701030"></div>
<div class="t" style="left:981.76px;top:286.37px;font-size:6.6px;line-height:6.6px;color:#f4d8e0;font-weight:normal;transform:scaleX(1.0000);">RGB: 216/33/91</div>
<div class="t" style="left:1039.86px;top:286.37px;font-size:6.6px;line-height:6.6px;color:#f4d8e0;font-weight:normal;transform:scaleX(1.0000);">RGB: 216/33/91</div>
<div class="r" style="left:1001px;top:301.4px;width:42.5px;height:13.100000000000023px;background:#f3f3f3;border-right:1px solid #7a7a7a;border-bottom:1px solid #7a7a7a;border-left:1px solid #fff;border-top:1px solid #fff;box-sizing:border-box"></div>
<div class="t" style="left:1017.01px;top:304.26px;font-size:7.2px;line-height:7.2px;color:#222;font-weight:normal;transform:scaleX(1.0000);">OK</div>
<div class="r" style="left:1048.2px;top:301.4px;width:43.0px;height:13.100000000000023px;background:#f3f3f3;border-right:1px solid #7a7a7a;border-bottom:1px solid #7a7a7a;border-left:1px solid #fff;border-top:1px solid #fff;box-sizing:border-box"></div>
<div class="t" style="left:1058.51px;top:304.26px;font-size:7.2px;line-height:7.2px;color:#222;font-weight:normal;transform:scaleX(1.0000);">Cancel</div>
</body></html>
